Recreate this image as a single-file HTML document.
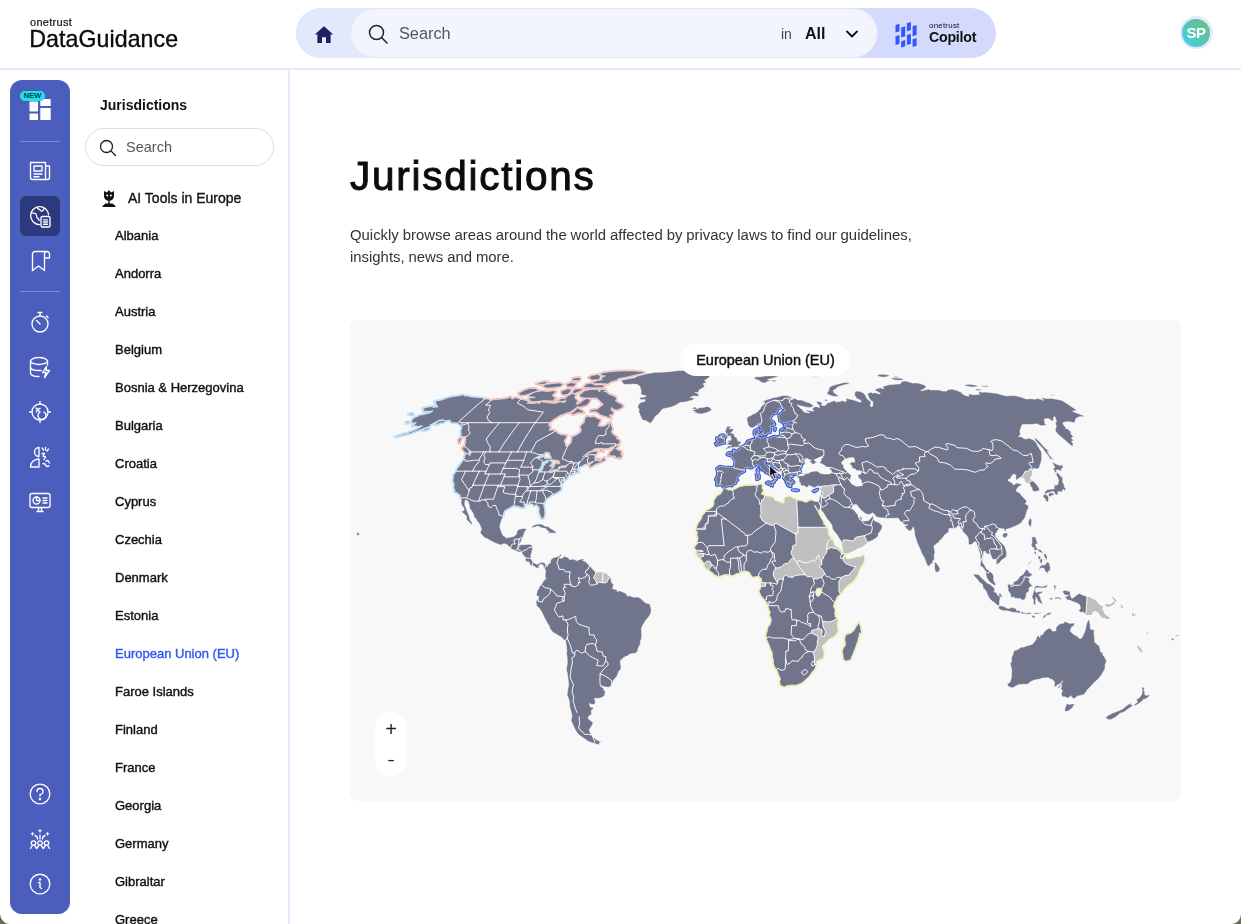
<!DOCTYPE html>
<html lang="en">
<head>
<meta charset="utf-8">
<title>Jurisdictions | DataGuidance</title>
<style>
*{box-sizing:border-box;margin:0;padding:0}
html,body{width:1241px;height:924px;overflow:hidden;background:#fff;font-family:"Liberation Sans",Arial,sans-serif;color:#111}
.abs{position:absolute}
#hdr{will-change:transform;position:absolute;left:0;top:0;width:1241px;height:70px;background:#fff;border-bottom:2px solid #e6eafc}
#logo1{position:absolute;left:30px;top:15.5px;font-size:11px;letter-spacing:.3px;color:#111;line-height:12px;-webkit-text-stroke:.2px #111}
#logo2{position:absolute;left:29.3px;top:25px;font-size:23.2px;letter-spacing:.05px;color:#0b0b0b;line-height:28px;-webkit-text-stroke:.35px #0b0b0b}
#pill{position:absolute;left:296px;top:8px;width:700px;height:50px;border-radius:25px;background:#d3dafb;overflow:hidden}
#pillL{position:absolute;left:0;top:0;width:120px;height:50px;background:#e4e8fc}
#sbox{position:absolute;left:54px;top:0;width:528px;height:50px;border-radius:25px;background:#f3f5fe;border:1px solid #dfe4fb}
#sph{position:absolute;left:48px;top:14px;font-size:16.3px;color:#555;line-height:20px}
#sin{position:absolute;left:430px;top:17px;font-size:14px;color:#444;line-height:16px}
#sall{position:absolute;left:454px;top:16px;font-size:16px;font-weight:bold;color:#111;line-height:18px}
#cop1{position:absolute;left:633px;top:13px;font-size:8px;color:#111;line-height:9px;letter-spacing:.2px}
#cop2{position:absolute;left:633px;top:20.5px;font-size:14.2px;font-weight:bold;color:#111;line-height:17px;letter-spacing:-.25px}
#ava{position:absolute;left:1179.5px;top:16px;width:33px;height:33px;border-radius:50%;background:#e4e7fd}
#ava i{position:absolute;left:2.5px;top:2.5px;width:28px;height:28px;border-radius:50%;background:linear-gradient(45deg,#45d0e8 10%,#5cc4a4 60%,#6cc07a 100%);font-style:normal;color:#fff;font-weight:bold;font-size:15px;line-height:28px;text-align:center;letter-spacing:-.5px}
#nav{position:absolute;left:10px;top:80px;width:60px;height:834px;border-radius:12px;background:#4b5ebd}
#nav .sep{position:absolute;left:10px;width:40px;height:1px;background:#7c8ad0}
#nav .act{position:absolute;left:10px;top:116px;width:40px;height:40px;border-radius:6px;background:#2c397f}
#nav svg{position:absolute;left:18px;width:24px;height:24px;fill:none;stroke:#fff;stroke-width:1.35;stroke-linecap:round;stroke-linejoin:round;overflow:visible}
#new{position:absolute;left:10.4px;top:11.3px;width:24.2px;height:9.4px;border-radius:4.7px;background:#19e3ee;color:#0a1a2a;font-size:7.4px;line-height:9.6px;text-align:center;letter-spacing:0;-webkit-text-stroke:.2px #0a1a2a}
#side{will-change:transform;position:absolute;left:70px;top:70px;width:220px;height:854px;border-right:2px solid #e6eafc;overflow:hidden}
#sttl{position:absolute;left:30px;top:27px;font-size:14px;font-weight:bold;line-height:16px;color:#111}
#ssearch{position:absolute;left:15px;top:58px;width:189px;height:38px;border-radius:19px;border:1px solid #dcdcdc;background:#fff}
#ssearch span{position:absolute;left:40px;top:10px;font-size:14.5px;color:#555;line-height:17px}
#ait{position:absolute;left:58px;top:120px;font-size:14px;line-height:16px;color:#111;-webkit-text-stroke:.35px #111}
ul#jl{position:absolute;left:45px;top:158px;list-style:none}
ul#jl li{height:38px;font-size:13px;line-height:16px;color:#111;-webkit-text-stroke:.4px #111;white-space:nowrap}
ul#jl li.sel{color:#3257f2;-webkit-text-stroke:.4px #3257f2}
#h1{will-change:transform;position:absolute;left:349.6px;top:151px;font-size:40.5px;line-height:50px;color:#0c0c0c;letter-spacing:1.75px;-webkit-text-stroke:1px #0c0c0c}
#desc{will-change:transform;position:absolute;left:350px;top:224px;width:600px;font-size:14.9px;line-height:22px;color:#333;word-spacing:-.25px}
#card{position:absolute;left:350px;top:320px;width:831px;height:481px;border-radius:8px;background:#f8f8f8;overflow:hidden}
#tip{will-change:transform;position:absolute;left:330px;top:24px;width:171px;height:32px;border-radius:16px;background:#fff;font-size:14.5px;line-height:32px;text-align:center;color:#111;-webkit-text-stroke:.45px #111}
#zpill{will-change:transform;position:absolute;left:25px;top:392px;width:32px;height:64px;border-radius:16px;background:#fff}#zpill span{position:absolute;left:0;width:32px;text-align:center;line-height:28px;color:#222}
</style>
</head>
<body>
<div id="hdr">
  <div id="logo1">onetrust</div>
  <div id="logo2">DataGuidance</div>
  <div id="pill">
    <div id="pillL"></div>
    <svg class="abs" style="left:18px;top:16.5px" width="20" height="20" viewBox="0 0 20 20"><path d="M10 1.2 L0.8 9.6 H3.4 V18 H8 V12.2 H12 V18 H16.6 V9.6 H19.2 Z" fill="#1a2260"/></svg>
    <div id="sbox">
      <svg class="abs" style="left:16px;top:14px" width="22" height="22" viewBox="0 0 22 22" fill="none" stroke="#222" stroke-width="1.5" stroke-linecap="round"><circle cx="9.5" cy="9.5" r="7"/><path d="M14.8 14.8 L20 20"/></svg>
      <div id="sph">Search</div>
      <div id="sin">in</div>
      <div id="sall">All</div>
      <svg class="abs" style="left:494px;top:19px" width="14" height="12" viewBox="0 0 14 12" fill="none" stroke="#111" stroke-width="1.8" stroke-linecap="round" stroke-linejoin="round"><path d="M2 3.5 L7 8.5 L12 3.5"/></svg>
    </div>
    <svg class="abs" style="left:598px;top:12px" width="24" height="28" viewBox="0 0 24 28" fill="#3355ff"><path d="M1.5 4.9 L5.5 3.7 V11.3 L1.5 12.5 Z M1.5 16.2 L5.5 15 V23.8 L1.5 25 Z M7.2 7.4 L11.2 6.2 V16.3 L7.2 17.5 Z M7.2 21.2 L11.2 20 V26.3 L7.2 27.5 Z M12.9 3.2 L16.9 2 V10.0 L12.9 11.2 Z M12.9 14.899999999999999 L16.9 13.7 V23.8 L12.9 25 Z M18.6 6.2 L22.6 5 V15.0 L18.6 16.2 Z M18.6 19.2 L22.6 18 V25.8 L18.6 27 Z"/></svg>
    <div id="cop1">onetrust</div>
    <div id="cop2">Copilot</div>
  </div>
  <div id="ava"><i>SP</i></div>
</div>

<div id="nav">
  <div class="sep" style="top:60.5px"></div>
  <div class="sep" style="top:211px"></div>
  <div class="act"></div>
  <!-- dashboard -->
  <svg style="top:17px" viewBox="0 0 24 24"><g fill="#fff" stroke="none"><rect x="1.5" y="4.6" width="8.5" height="9.8" rx=".6"/><rect x="12.3" y="2" width="10.4" height="7" rx=".6"/><rect x="1.5" y="16.5" width="8.5" height="6.5" rx=".6"/><rect x="12.300" y="11.100" width="10.400" height="11.900" rx=".600"/></g></svg>
  <div id="new">NEW</div>
  <!-- news -->
  <svg style="top:79px" viewBox="0 0 24 24"><path d="M2.5 3.5 H17.5 V20.5 H4.5 A2 2 0 0 1 2.5 18.5 Z"/><path d="M17.5 7 H21.5 V18.5 A2 2 0 0 1 19.5 20.5 H17.5"/><rect x="6" y="7" width="8" height="5"/><path d="M6 15 H14 M6 17.7 H11"/></svg>
  <!-- globe + doc (active) -->
  <svg style="top:124px" viewBox="0 0 24 24"><path d="M11.5 20.6 A9 9 0 1 1 20.6 10.8"/><path d="M3.2 9 C5 9.5 6 8.5 7.5 9.5 C9 10.5 8 12 9 13.5 C10 15 11 14.5 11 16.5"/><path d="M9 3.2 C9.5 5 11.5 5 12.5 6.5 C13.5 8 15.5 6.5 16 4.5"/><rect x="13" y="12.5" width="9" height="10.5" rx="1.5"/><path d="M15.5 15.8 H19.5 M15.5 18 H19.5 M15.5 20.2 H19.5"/></svg>
  <!-- bookmark scroll -->
  <svg style="top:169px" viewBox="0 0 24 24"><path d="M4.5 21.5 V5 A2.5 2.5 0 0 1 7 2.5 H19 A2.5 2.5 0 0 1 21.5 5 V9 H16.5 V5 A2.5 2.5 0 0 1 19 2.5"/><path d="M4.5 21.5 L10.5 17 L16.5 21.5 V9"/></svg>
  <!-- stopwatch -->
  <svg style="top:230px" viewBox="0 0 24 24"><circle cx="12" cy="14" r="8"/><path d="M10 2.5 H14 M12 2.5 V6 M18.5 6 L20 7.5 M12 14 L8.5 10.5"/></svg>
  <!-- database bolt -->
  <svg style="top:275px" viewBox="0 0 24 24"><ellipse cx="11" cy="6" rx="8.5" ry="3.5"/><path d="M2.5 6 V18 C2.5 20 6 21.5 11 21.5 M19.5 6 V10 M2.5 12 C2.5 14 6 15.5 11 15.5 H13"/><path d="M18.5 11.5 L14.5 17.5 H18 L16.5 22.5 L21.5 15.5 H18 Z"/></svg>
  <!-- target -->
  <svg style="top:320px" viewBox="0 0 24 24"><circle cx="12" cy="12" r="8"/><path d="M12 1.5 V4 M12 20 V22.5 M1.5 12 H4 M20 12 H22.5"/><path d="M12 12 L8 8 M12 12 A4 4 0 1 0 16 12 M8.5 12 A3.5 3.5 0 0 1 12 8.5"/></svg>
  <!-- person split -->
  <svg style="top:365px" viewBox="0 0 24 24"><path d="M11 2.5 A4.5 4.5 0 0 0 11 11.5 Z M11 14 C6 14 2.5 17.5 2.5 22 H11 Z"/><path d="M14 3 L15.5 5 M17.5 2.5 V5 M20.5 4 L19 6 M14 8.5 H16.5 L15 11 L17.5 12 L16 14.5 M18 16 L20 15.5 L21.5 18 M15 18.5 L17 19 L18.5 21.5 L21 21"/></svg>
  <!-- monitor chart -->
  <svg style="top:410px" viewBox="0 0 24 24"><rect x="2" y="3.5" width="20" height="14" rx="2"/><path d="M9 21.5 H15 M10.5 17.5 V21.5 M13.5 17.5 V21.5"/><circle cx="8.5" cy="10.5" r="3.5"/><path d="M8.5 7 V10.5 H12 M15 8 H19 M15 10.5 H19 M15 13 H19"/></svg>
  <!-- help -->
  <svg style="top:702px" viewBox="0 0 24 24"><circle cx="12" cy="12" r="9.800"/><path d="M9 9.5 A3 3 0 1 1 12 12.5 V14"/><circle cx="12" cy="17" r=".6" fill="#fff"/></svg>
  <!-- community -->
  <svg style="top:747px" viewBox="0 0 24 24"><circle cx="5.5" cy="16" r="2.2"/><circle cx="12" cy="16" r="2.2"/><circle cx="18.500" cy="16" r="2.200"/><path d="M2.500 21.500 L4 19 M7 19 L8.700 21.500 L10.500 19 M13.500 19 L15.300 21.500 L17 19 M20 19 L21.500 21.500"/><path d="M12 12 V8 M9.500 12 C9.500 10 8.500 9 7 8.500 M14.500 12 C14.500 10 15.500 9 17 8.500"/><path d="M12 2.500 V5 M10.800 3.750 H13.200 M4.500 5.500 V8 M3.300 6.750 H5.700 M19.500 5.500 V8 M18.300 6.750 H20.700" stroke-width="1.200"/></svg>
  <!-- info -->
  <svg style="top:792px" viewBox="0 0 24 24"><circle cx="12" cy="12" r="9.800"/><path d="M10.500 10.500 H12 V15.500 L13.500 16.500"/><circle cx="12" cy="7.500" r=".6" fill="#fff"/></svg>
</div>

<div id="side">
  <div id="sttl">Jurisdictions</div>
  <div id="ssearch">
    <svg class="abs" style="left:13px;top:10px" width="18" height="18" viewBox="0 0 18 18" fill="none" stroke="#222" stroke-width="1.3" stroke-linecap="round"><circle cx="7.500" cy="7.500" r="6"/><path d="M12 12 L16.500 16.500"/></svg>
    <span>Search</span>
  </div>
  <svg class="abs" style="left:30px;top:119px" width="18" height="19" viewBox="0 0 18 19" fill="#111"><path d="M9 1 L11 3.500 L14 2 V7 A5 5 0 0 1 4 7 V2 L7 3.500 Z M8.300 11.500 H9.700 V14.500 H8.300 Z M5.500 14.500 H12.500 L15.500 17 V18 H2.500 V17 Z"/><circle cx="7.200" cy="6.500" r="1" fill="#fff"/><circle cx="10.800" cy="6.500" r="1" fill="#fff"/></svg>
  <div id="ait">AI Tools in Europe</div>
  <ul id="jl">
    <li>Albania</li>
    <li>Andorra</li>
    <li>Austria</li>
    <li>Belgium</li>
    <li>Bosnia &amp; Herzegovina</li>
    <li>Bulgaria</li>
    <li>Croatia</li>
    <li>Cyprus</li>
    <li>Czechia</li>
    <li>Denmark</li>
    <li>Estonia</li>
    <li class="sel">European Union (EU)</li>
    <li>Faroe Islands</li>
    <li>Finland</li>
    <li>France</li>
    <li>Georgia</li>
    <li>Germany</li>
    <li>Gibraltar</li>
    <li>Greece</li>
  </ul>
</div>

<div id="h1">Jurisdictions</div>
<div id="desc">Quickly browse areas around the world affected by privacy laws to find our guidelines, insights, news and more.</div>

<div id="card">
<svg class="abs" style="left:0;top:0" width="831" height="480" viewBox="0 0 831 480" stroke-linejoin="round" stroke-linecap="round">
<path d="M510.4,306.7 510.7,309.3 511.3,312.1 510.4,313.9 509.3,312.6 509.2,315.7 508.2,318.0 508.1,320.1 506.9,323.0 506.2,325.3 504.9,328.8 503.3,333.1 501.7,336.5 500.8,339.5 499.0,340.2 496.1,341.0 493.5,339.3 493.0,334.7 492.3,331.5 492.6,330.2 493.9,327.5 495.2,326.1 495.6,323.9 494.9,319.8 494.9,318.0 496.3,314.6 498.4,314.0 500.9,313.2 502.7,311.8 504.0,310.7 505.4,307.9 506.2,306.7 507.5,305.1 508.7,302.7 509.9,305.3Z M378.2,170.2 380.5,170.0 382.6,170.5 385.9,168.7 390.3,166.6 394.5,165.7 399.1,165.7 403.3,165.3 405.4,165.5 407.7,165.2 410.2,164.3 412.8,164.9 411.9,166.9 412.0,168.6 413.2,170.2 412.6,171.6 411.0,173.9 413.4,175.0 416.1,176.7 418.4,176.7 421.1,177.5 423.2,178.1 424.0,180.3 426.7,181.5 429.6,182.3 432.7,184.0 434.8,182.6 434.7,180.6 434.8,178.9 436.4,177.3 438.9,176.7 440.6,177.0 442.1,178.4 444.1,179.1 447.0,180.3 449.4,180.6 451.8,180.9 455.9,182.5 458.2,181.5 459.3,180.6 461.0,180.3 462.7,180.6 463.9,181.2 464.8,185.0 464.5,186.0 465.4,187.6 466.5,189.5 467.7,191.0 468.5,192.6 468.9,194.0 469.9,195.8 471.5,198.7 473.2,201.7 473.7,202.0 473.3,203.9 475.4,205.6 476.8,207.3 477.3,209.6 478.0,211.8 478.0,214.0 478.7,216.3 480.4,217.7 481.7,218.5 483.1,222.5 484.1,225.3 485.0,226.1 486.1,227.2 487.9,227.8 489.9,230.1 491.7,232.0 492.6,232.6 494.0,234.0 494.0,235.5 492.6,236.7 493.7,236.5 494.6,237.2 496.4,239.3 498.4,239.7 502.1,238.9 504.5,237.9 506.2,237.8 508.7,237.4 511.4,236.8 513.6,235.5 513.5,237.9 514.2,239.7 513.1,242.4 511.7,245.2 510.5,246.8 508.8,250.0 507.6,254.1 506.0,256.7 503.8,259.8 501.4,262.4 499.8,263.3 498.3,264.3 496.5,266.0 494.5,268.3 492.9,270.1 490.4,273.7 488.7,275.6 487.0,276.8 486.7,278.1 485.6,280.5 484.4,282.2 484.2,283.3 483.4,286.0 483.6,287.2 484.6,288.2 485.0,290.7 484.5,292.4 484.9,294.2 485.3,297.2 486.6,298.0 487.5,299.2 487.0,302.8 487.0,305.5 487.1,309.0 487.4,311.4 485.3,314.6 483.1,316.6 480.6,317.7 477.8,319.4 475.9,321.9 473.6,323.9 472.2,324.9 471.7,326.7 472.6,329.5 473.1,330.9 473.4,333.7 473.2,336.2 472.6,337.9 470.6,338.8 468.6,339.6 466.6,340.7 465.8,342.0 466.4,344.5 465.5,346.6 464.8,348.9 464.0,350.0 462.2,351.7 461.3,352.9 459.7,355.5 457.3,358.0 454.6,360.4 453.1,361.8 450.6,363.5 447.5,364.5 445.6,365.2 442.2,364.9 439.3,365.2 436.5,365.7 434.1,366.9 432.3,365.9 430.7,365.6 430.5,364.3 429.5,361.8 430.6,359.3 429.8,357.0 428.5,354.2 427.5,351.3 426.6,349.4 424.9,347.2 423.7,344.0 423.3,339.3 422.4,336.2 422.5,332.9 421.2,330.3 419.5,325.8 417.8,321.9 416.1,317.6 416.2,314.6 417.1,311.8 418.1,307.3 420.3,304.5 421.3,301.1 421.4,299.2 420.2,296.3 419.4,294.7 419.9,293.8 420.4,292.1 419.7,291.1 419.1,289.5 417.9,286.2 417.5,284.7 416.7,282.6 414.8,280.1 413.7,278.6 411.1,275.8 410.1,273.3 409.0,270.9 410.4,269.4 410.6,268.0 411.1,266.3 411.5,263.9 411.6,262.4 411.8,260.8 411.3,257.9 410.1,257.9 409.4,256.3 407.9,256.3 405.9,256.6 405.0,256.7 402.4,257.0 400.7,254.5 399.7,252.5 398.2,251.4 395.7,251.1 393.2,251.3 390.3,252.0 389.8,252.8 386.8,253.5 384.2,254.8 382.1,255.8 379.9,254.8 377.4,254.4 374.9,254.6 372.2,255.2 370.8,255.8 368.2,256.9 366.2,255.3 364.9,255.1 362.4,252.5 360.6,251.4 359.1,250.1 356.4,248.3 355.4,246.9 354.5,245.2 354.4,243.8 353.5,242.4 352.0,240.5 350.8,238.8 349.8,237.9 348.1,236.0 346.6,234.6 345.9,232.6 346.4,231.3 346.0,229.8 344.3,227.7 345.3,226.4 346.8,224.2 347.4,221.4 348.2,218.3 347.0,214.6 347.6,212.1 345.8,210.7 346.1,208.7 347.8,204.5 348.7,202.5 351.1,199.4 352.4,195.8 355.1,192.8 356.4,190.6 359.8,189.1 363.0,186.5 364.3,183.7 363.8,183.0 364.1,180.6 365.4,178.4 367.3,175.7 369.4,174.7 371.2,173.5 372.9,170.2 373.5,168.6 374.9,168.3Z M466.7,268.5 465.9,271.6 465.9,274.2 466.7,276.1 468.6,276.4 470.1,275.0 471.6,272.5 471.9,268.8 469.9,268.1Z" fill="none" stroke="#eef6a6" stroke-width="3.0"/>
<path d="M110.6,177.3 110.0,174.7 109.0,174.3 108.3,173.6 106.7,172.5 105.0,172.3 104.8,171.9 105.0,169.8 104.3,169.0 103.7,167.1 104.1,166.3 104.2,162.9 103.3,162.4 103.0,159.7 103.5,158.2 103.5,155.5 105.9,151.9 106.9,148.9 108.2,147.5 110.8,144.0 111.6,142.9 113.7,139.5 114.6,137.5 114.9,136.0 115.8,133.6 119.6,134.4 119.7,135.8 121.2,132.6 121.2,131.9 125.4,131.9 129.7,131.9 134.0,131.9 138.3,131.9 142.5,131.9 146.8,131.9 151.1,131.9 155.3,131.9 159.6,131.9 163.9,131.9 168.2,131.9 172.4,131.9 176.7,131.9 181.0,131.9 181.8,132.7 185.1,133.0 187.7,134.4 189.8,134.5 192.0,134.7 192.7,134.4 192.4,134.7 189.3,135.8 184.7,138.1 188.1,138.2 191.8,137.4 194.1,136.2 194.6,138.6 197.9,138.6 200.5,138.8 200.9,138.2 201.1,138.8 202.0,139.9 201.8,139.9 199.9,140.6 202.0,142.1 201.7,143.7 199.5,146.1 200.2,146.5 202.2,146.0 201.9,148.4 200.1,150.4 199.6,151.0 199.4,150.9 198.3,152.1 200.0,152.9 202.5,152.3 205.6,151.2 209.6,148.9 209.4,148.9 209.7,147.8 209.7,147.7 209.8,147.8 213.2,147.8 216.1,147.1 217.0,145.4 216.4,145.5 216.8,145.1 219.7,143.3 221.2,142.9 224.8,142.9 228.3,142.9 230.2,141.8 231.8,140.4 233.3,138.2 235.7,136.2 237.6,136.4 238.5,137.1 237.2,141.0 237.7,142.1 238.2,143.2 236.1,144.3 233.8,144.6 233.0,145.7 230.0,146.6 228.3,148.3 228.2,149.4 227.0,150.3 227.4,151.4 227.6,151.8 228.5,151.1 228.8,152.1 227.1,152.5 226.0,152.6 225.0,152.9 221.7,153.3 223.9,153.9 221.3,154.7 218.9,154.8 218.5,155.5 216.6,158.6 215.1,159.7 214.1,158.5 214.6,160.1 214.3,161.3 213.2,162.4 211.3,164.8 211.8,161.8 211.7,159.0 210.9,162.4 210.3,165.2 211.0,165.6 211.1,167.4 210.9,170.1 208.0,171.9 204.1,174.0 201.4,175.0 198.8,177.1 195.9,179.2 193.6,183.9 193.9,187.1 194.5,189.2 194.8,194.1 194.2,196.6 193.3,198.3 191.6,198.5 190.3,195.8 190.0,194.8 189.5,193.5 188.9,191.0 189.4,189.3 189.0,187.2 188.3,186.2 186.8,184.7 183.8,185.7 183.2,184.6 182.7,183.9 179.8,183.9 177.9,184.0 175.3,183.9 174.0,184.6 174.4,186.8 173.7,187.6 171.1,187.4 169.0,186.5 166.7,186.1 163.6,185.7 161.0,186.8 159.6,187.8 156.6,189.3 154.3,191.0 153.5,193.3 153.3,196.2 148.8,194.9 148.6,191.9 147.2,189.6 145.6,185.4 143.0,185.5 140.9,187.8 138.1,186.0 137.9,183.2 135.1,179.9 131.1,179.9 130.7,181.1 127.3,181.1 123.9,181.1 120.0,179.5 116.2,177.8 113.5,177.8 110.8,177.8Z M189.0,150.4 188.8,152.1 190.4,151.9 192.6,149.8 193.5,146.5 195.6,143.5 197.2,142.9 199.1,141.0 199.8,140.3 198.1,140.2 195.9,140.7 194.5,141.3 192.6,142.6 191.2,144.0 191.9,144.8 190.0,147.9Z M115.2,116.6 111.6,116.7 111.0,115.2 111.6,113.7 110.9,112.7 111.0,110.5 112.1,107.4 110.6,105.0 109.1,103.9 106.8,102.8 104.4,102.8 102.0,102.7 100.1,101.3 100.3,99.9 97.6,100.3 94.9,100.7 93.5,102.7 91.1,102.8 87.4,104.3 84.1,104.8 86.0,103.7 89.1,101.3 91.6,100.8 94.2,100.4 93.5,99.6 89.4,100.1 86.6,101.4 83.9,103.0 80.4,104.5 80.3,105.7 76.6,107.4 74.2,108.1 70.7,109.5 67.0,111.0 62.7,112.3 61.7,113.1 57.8,113.9 54.7,114.8 51.2,115.6 47.4,116.8 44.5,116.8 48.9,115.6 51.2,114.7 53.7,113.9 57.6,113.1 59.5,112.3 64.0,110.6 67.0,109.2 70.0,107.4 72.6,105.9 69.7,105.8 67.8,106.6 66.0,105.5 61.9,106.2 64.3,104.8 66.3,102.7 65.2,102.8 62.0,103.0 61.8,101.2 62.9,98.9 63.9,98.1 67.0,96.8 70.4,95.1 73.0,94.8 77.2,93.8 80.7,92.8 81.9,91.6 83.2,90.6 80.8,91.0 78.5,91.3 76.2,91.3 73.9,91.3 73.1,91.1 74.3,89.5 72.5,88.6 75.4,87.8 78.4,87.0 81.2,86.7 84.0,86.3 82.7,87.4 85.2,87.3 87.7,87.1 87.7,86.4 87.3,85.3 85.8,84.8 86.2,83.4 86.3,82.8 84.2,81.9 87.1,80.7 90.6,80.4 95.8,78.6 99.7,77.3 104.2,76.5 106.4,76.2 108.6,75.9 113.0,74.8 114.6,76.1 116.6,76.1 118.5,76.2 120.6,76.9 122.1,77.0 123.6,77.2 125.6,77.4 127.6,77.6 129.5,77.7 131.4,77.8 133.1,78.3 134.9,78.9 129.4,83.3 124.1,87.8 118.9,92.5 113.7,97.2 108.7,101.9 110.3,102.3 111.9,102.7 112.0,105.5 115.4,104.1 118.3,103.2 118.0,104.5 119.0,106.8 118.5,110.5 119.4,111.8 120.2,113.1 117.8,115.8 115.8,116.6 115.2,116.6Z M74.1,109.2 77.9,108.0 79.6,108.0 78.5,109.2 75.6,110.2 73.2,110.8Z M59.2,101.7 58.7,103.0 56.0,103.3 56.2,102.2Z M61.0,95.1 59.3,94.3 58.3,94.1 61.9,93.3 63.7,94.3Z" fill="none" stroke="#b3defc" stroke-width="2.8"/>
<path d="M120.9,131.1 118.9,129.6 118.1,129.2 116.9,127.9 114.4,126.1 115.1,125.1 115.2,123.0 115.7,121.1 115.7,119.8 115.8,117.6 115.2,116.6 115.8,116.6 117.8,115.8 120.2,113.1 119.4,111.8 118.5,110.5 119.0,106.8 118.0,104.5 118.3,103.2 115.4,104.1 112.0,105.5 111.9,102.7 110.3,102.3 108.7,101.9 113.7,97.2 118.9,92.5 124.1,87.8 129.4,83.3 134.9,78.9 136.5,79.0 138.2,79.1 139.5,79.9 140.8,80.6 143.7,79.7 146.2,79.5 148.6,79.3 150.6,79.2 152.6,79.0 154.7,78.7 156.8,78.5 160.6,76.8 160.9,78.0 162.2,79.2 165.5,77.6 166.9,78.0 168.4,78.5 170.1,79.0 171.8,79.4 173.9,80.0 176.0,80.6 177.7,81.2 179.3,81.8 176.8,83.3 179.5,83.5 181.9,83.4 184.2,83.4 186.3,83.1 188.4,82.8 189.1,84.0 191.6,81.3 192.7,82.1 195.1,82.4 197.5,82.8 199.6,83.0 201.7,83.3 204.0,83.3 206.3,83.3 210.4,81.6 211.7,82.2 213.1,82.8 215.9,81.6 215.6,79.7 214.4,81.1 212.5,81.2 210.6,81.3 209.2,80.9 207.8,80.4 211.3,78.5 213.2,78.4 215.0,78.3 215.4,78.9 215.2,78.0 218.2,75.7 222.9,73.4 224.3,74.2 225.8,75.0 224.5,77.6 225.9,79.2 226.9,80.2 228.0,81.1 226.0,83.3 227.3,84.5 230.4,82.8 233.1,80.4 236.4,78.4 238.4,78.9 240.4,79.4 239.8,81.6 236.9,85.2 234.1,86.0 231.1,86.9 229.3,86.9 227.4,86.4 223.7,89.6 220.0,92.1 217.8,92.6 213.4,94.2 209.7,95.6 206.6,97.6 202.8,99.9 199.7,102.7 198.5,105.9 200.5,105.9 199.3,110.5 202.3,110.0 204.1,110.4 205.8,110.9 207.3,113.1 209.0,113.9 210.8,114.7 213.7,115.0 217.0,115.4 215.6,118.4 214.0,121.1 215.4,123.8 215.4,125.7 217.0,126.2 219.2,125.1 221.0,123.1 221.4,121.1 222.0,119.0 221.6,116.7 223.2,116.6 226.5,115.0 230.6,112.3 231.3,110.5 231.2,109.2 230.3,106.7 231.3,105.3 234.2,102.6 234.5,100.7 234.8,98.9 236.5,96.6 237.4,96.3 240.7,97.1 244.4,96.6 246.3,97.9 247.8,98.6 250.9,99.9 249.3,103.0 248.1,105.7 250.7,106.5 254.8,105.9 256.3,105.3 258.4,103.0 260.1,101.8 260.9,104.0 261.7,106.6 262.6,109.2 261.2,111.7 263.1,114.6 264.8,115.5 265.9,116.3 267.4,117.9 266.1,118.4 267.9,119.2 268.9,119.5 269.8,121.1 269.5,123.1 268.7,123.8 265.5,125.4 261.0,127.0 258.4,128.4 254.4,128.7 252.1,128.5 249.8,128.4 247.1,128.5 244.5,128.7 241.5,131.1 239.7,131.4 235.3,134.3 233.6,136.0 232.5,137.1 235.4,135.1 238.1,133.4 240.7,132.3 243.3,131.5 245.5,131.2 247.9,132.6 245.5,134.5 242.6,134.5 244.1,135.5 245.7,135.2 244.6,137.1 245.0,139.5 246.3,140.2 248.9,141.0 251.2,141.1 251.3,140.4 253.0,138.5 254.5,137.4 255.3,139.7 254.6,140.4 251.9,141.9 249.4,142.9 245.7,144.0 242.0,146.2 240.1,147.2 239.2,146.2 240.6,144.0 243.5,141.9 244.0,141.0 240.7,142.2 238.2,143.2 237.7,142.1 237.2,141.0 238.5,137.1 237.6,136.4 235.7,136.2 233.3,138.2 231.8,140.4 230.2,141.8 228.3,142.9 224.8,142.9 221.2,142.9 219.7,143.3 216.8,145.1 216.4,145.5 215.0,145.8 212.8,145.8 209.9,146.4 208.1,147.6 209.7,147.7 209.7,147.8 209.4,148.9 208.3,148.9 205.7,149.7 203.5,149.6 200.6,151.2 199.6,151.0 200.1,150.4 201.9,148.4 203.7,147.6 204.9,144.8 206.7,142.4 207.0,144.0 209.6,143.5 209.7,142.1 208.6,140.4 206.7,140.2 204.0,139.9 202.0,139.9 201.1,138.8 200.9,138.2 201.5,137.4 200.0,134.8 199.4,132.6 195.7,132.2 192.7,134.4 192.0,134.7 189.8,134.5 187.7,134.4 185.1,133.0 181.8,132.7 181.0,131.9 176.7,131.9 172.4,131.9 168.2,131.9 163.9,131.9 159.6,131.9 155.3,131.9 151.1,131.9 146.8,131.9 142.5,131.9 138.3,131.9 134.0,131.9 129.7,131.9 125.4,131.9 121.2,131.9Z M249.2,140.2 246.6,139.7 245.5,138.5 248.4,139.1 250.6,138.9Z M251.6,130.0 253.6,131.7 251.0,131.1 248.3,129.6Z M119.1,132.2 118.7,133.6 116.0,133.0 114.5,131.9 113.7,130.6 112.3,128.9 112.3,127.2 114.8,126.9 117.2,128.4 118.2,129.8Z M108.3,120.0 109.7,118.2 112.0,118.4 110.2,120.8 109.5,123.3 108.5,122.2Z M234.2,93.1 231.2,92.8 228.3,92.6 225.7,93.6 223.1,94.6 220.3,93.6 224.0,91.8 227.5,88.1 229.5,89.3 230.9,90.0 232.4,90.6 233.3,92.1Z M250.3,86.9 253.4,84.5 252.2,83.3 250.9,82.1 249.9,80.9 248.9,79.7 247.7,78.9 246.4,78.0 244.1,78.0 241.7,78.0 239.3,78.0 237.1,78.0 234.9,78.0 232.6,77.6 230.3,77.1 229.5,75.0 232.0,73.0 234.9,70.7 238.5,70.0 242.0,69.3 245.0,69.4 247.9,69.5 248.9,71.4 250.2,71.4 249.3,70.2 253.0,69.5 254.5,69.7 255.9,70.0 255.7,71.4 253.7,71.5 256.3,71.8 257.2,72.8 258.2,73.9 259.9,74.6 261.7,75.2 263.4,75.9 265.2,76.6 266.5,78.7 265.3,80.9 267.3,82.1 269.4,83.3 271.1,84.2 272.9,85.2 273.0,86.9 270.3,88.5 267.6,90.1 265.1,89.5 262.6,88.9 261.7,87.1 261.0,90.1 262.2,91.3 263.5,92.6 262.6,95.1 259.6,94.6 260.4,96.8 261.1,98.6 259.0,97.6 257.3,97.1 255.7,96.6 253.2,95.8 250.7,95.1 248.8,93.3 247.4,92.4 246.0,91.6 243.1,91.7 240.1,91.8 240.3,90.1 243.9,89.6 247.5,89.1Z M179.3,76.6 179.3,75.0 184.2,72.3 188.0,71.6 191.8,70.9 193.8,71.1 195.8,71.4 197.9,71.6 201.0,71.1 204.0,70.7 205.1,71.3 206.3,71.8 202.6,74.6 202.8,76.2 204.5,77.1 206.3,78.0 203.7,79.0 205.1,80.4 202.0,80.9 199.8,80.8 197.7,80.6 195.4,80.6 193.2,80.6 190.0,81.1 186.8,81.6 184.1,81.6 181.4,81.6 180.4,80.8 179.4,79.9 178.5,78.3 181.6,77.8 184.8,77.3 182.0,77.0Z M211.4,72.7 211.3,71.1 214.5,70.1 217.6,69.1 219.3,69.1 221.0,69.1 220.3,71.6 217.7,74.3 215.2,74.7 212.7,75.0 212.0,73.9Z M170.9,75.5 169.6,74.5 168.3,73.5 174.9,70.0 179.5,68.5 182.4,68.5 185.4,68.5 187.1,69.5 188.9,70.5 184.6,71.9 180.3,73.4 175.8,75.0 173.3,75.2Z M231.4,68.9 233.1,69.8 228.7,71.8 224.6,73.4 223.3,73.0 222.0,72.5 225.3,69.1 228.4,69.0Z M254.7,65.6 252.9,67.6 250.6,67.6 248.3,67.7 246.0,67.8 243.7,67.8 241.5,67.8 239.2,67.8 237.1,67.6 235.1,67.5 233.0,67.4 236.4,64.1 238.9,63.6 241.4,63.2 243.3,64.2 245.1,65.2 247.4,65.1 249.7,65.0 252.0,64.9 253.3,65.3Z M202.2,67.8 199.2,67.9 196.1,68.0 194.7,67.1 193.3,66.3 194.8,64.5 197.7,64.2 200.7,63.8 203.6,63.4 206.8,63.2 209.9,63.0 211.4,63.8 212.9,64.5 210.2,66.7 207.6,67.1 204.9,67.4Z M220.7,62.8 223.3,63.0 225.9,63.2 225.6,64.9 222.8,66.7 220.3,66.7 217.8,66.7 216.9,65.6 216.2,64.5Z M194.2,61.5 196.3,61.7 198.4,61.9 194.6,64.1 192.2,64.3 189.9,64.5 187.9,64.2 185.9,63.9 190.0,62.7Z M230.3,59.1 229.3,60.5 226.9,60.5 224.5,60.5 222.1,60.5 222.7,58.3 225.2,58.0 227.6,57.7 230.0,57.5Z M238.3,57.7 242.1,55.4 245.0,54.9 247.8,54.5 249.2,55.2 250.6,55.9 249.8,57.9 249.3,59.7 246.9,59.7 244.4,59.8 242.0,59.9 240.7,59.1 239.5,58.4Z M249.4,54.5 253.1,52.7 255.9,52.4 258.7,52.1 261.4,51.8 264.1,51.5 266.9,51.2 269.4,51.1 271.9,51.1 274.4,51.0 276.9,51.0 279.4,50.9 281.9,50.9 284.0,51.1 286.2,51.2 288.3,51.4 290.5,51.6 292.7,51.8 293.7,52.3 294.7,52.9 292.3,53.4 289.8,53.9 287.3,54.5 284.3,55.2 281.3,55.9 277.9,56.7 274.4,57.5 271.1,58.1 267.8,58.7 267.0,60.3 263.8,61.1 260.6,61.9 257.9,63.9 255.8,63.8 253.7,63.7 251.6,63.6 249.1,63.6 246.7,63.6 244.2,63.6 243.3,63.0 242.3,62.4 245.0,61.4 247.6,60.5 250.1,60.1 252.5,59.7 251.7,59.0 250.9,58.3 255.2,55.9 253.2,55.4 251.3,54.9Z M268.0,126.5 265.4,128.7 266.5,129.3 267.5,129.3 268.0,130.6 270.6,130.7 271.5,131.4 270.4,132.7 272.1,133.0 270.3,134.7 272.1,134.7 272.0,136.0 270.4,138.4 269.3,138.4 269.1,136.6 268.1,137.8 266.4,137.7 265.3,137.7 265.9,136.3 264.3,135.8 261.9,135.8 259.3,135.6 257.8,135.8 259.7,133.6 258.8,133.2 261.1,131.4 262.3,130.2 264.7,127.3 266.4,125.4 269.2,124.9Z" fill="none" stroke="#f8bdb6" stroke-width="2.8"/>
<path d="M453.3,142.5 453.2,143.2 451.3,145.1 451.3,146.2 451.2,147.3 450.1,147.9 449.3,149.8 450.6,151.2 450.7,151.3 448.4,151.2 447.0,152.1 447.7,153.2 446.6,154.7 446.6,154.8 446.3,154.4 444.2,154.1 442.8,154.1 441.5,154.8 442.1,155.7 442.9,156.4 441.9,155.8 442.1,156.9 440.7,156.1 441.5,156.9 440.7,156.8 439.6,155.1 438.9,156.2 439.8,157.9 440.8,159.0 439.9,158.6 439.9,159.6 440.6,159.4 442.8,160.6 444.0,162.4 442.9,163.4 441.8,162.5 440.4,162.5 441.0,163.5 441.7,164.1 440.9,164.3 440.0,163.6 440.3,164.9 440.8,166.0 441.2,166.7 439.8,165.9 439.6,166.9 438.6,165.2 438.3,165.7 437.7,165.7 437.5,164.5 436.6,163.4 436.0,162.5 437.3,161.7 439.2,162.0 440.2,162.4 438.9,161.3 437.5,161.3 436.6,161.4 435.8,160.8 435.0,159.7 434.1,158.8 433.7,158.2 433.3,157.6 433.8,157.6 435.1,154.6 437.3,153.9 439.5,153.2 438.7,150.1 437.8,147.1 434.4,147.1 431.0,147.1 429.1,150.0 429.0,150.0 428.1,149.4 426.4,148.4 425.5,147.6 424.2,147.1 422.9,146.4 421.3,145.4 420.5,143.7 420.4,142.9 419.4,141.9 418.1,143.3 417.5,142.6 417.2,141.7 417.8,141.1 417.3,140.7 417.0,141.0 414.7,141.8 414.6,142.4 415.2,143.0 414.7,144.4 415.5,145.5 417.6,146.8 418.5,148.4 419.3,150.0 421.2,151.2 423.9,151.5 423.4,152.3 424.3,153.2 425.6,153.6 428.2,155.0 429.6,156.4 429.3,157.4 428.4,156.7 426.5,155.5 425.3,156.9 425.1,157.5 426.7,159.3 425.5,160.1 424.4,162.5 423.4,162.1 423.8,160.6 424.5,159.6 424.1,158.6 423.0,156.7 422.3,156.7 421.4,155.8 420.9,155.0 420.0,155.1 419.7,154.4 418.2,153.5 416.9,153.3 415.9,152.8 414.9,151.9 414.0,150.9 412.4,150.1 410.9,148.6 410.4,146.9 409.2,145.4 407.2,144.6 406.3,144.8 405.2,146.0 404.7,146.2 403.5,146.5 403.0,146.9 402.2,147.8 400.7,148.2 399.3,147.6 397.6,147.3 395.6,147.3 394.3,148.2 394.2,149.6 394.8,150.4 394.5,151.5 392.3,152.9 390.1,153.7 389.2,154.8 387.3,156.9 386.6,158.3 387.9,160.3 386.1,161.4 385.7,163.4 385.0,163.5 383.6,164.1 382.2,165.9 381.6,165.6 379.2,165.9 377.1,166.0 375.9,166.6 374.8,167.6 374.3,168.0 372.7,166.6 371.2,164.6 369.0,165.2 366.4,165.2 366.7,162.5 366.8,161.1 365.4,160.1 365.7,158.6 367.0,156.4 367.5,153.6 367.3,150.7 366.4,148.7 368.4,147.3 370.1,146.2 372.3,146.6 374.5,146.9 378.8,147.1 380.6,147.3 382.9,147.5 383.8,147.1 384.6,143.9 384.9,141.4 384.7,139.7 383.3,138.8 382.5,136.7 380.5,136.0 379.9,135.5 377.8,135.2 376.9,134.5 377.0,133.7 378.6,132.7 380.8,132.3 381.4,133.2 383.0,132.9 384.0,132.9 383.8,132.3 383.1,130.0 383.8,130.2 384.6,130.0 384.9,131.0 386.8,131.1 387.5,130.6 388.1,129.9 389.7,129.3 390.6,128.7 390.7,127.2 391.3,126.6 392.4,126.4 393.5,125.8 394.1,125.5 394.6,125.0 396.0,123.8 397.3,121.2 398.7,120.6 400.3,120.0 402.0,120.2 402.2,119.2 404.3,119.5 405.1,119.6 405.5,118.7 405.8,118.0 405.2,117.5 406.0,117.1 405.2,116.0 405.2,115.8 404.6,114.6 404.0,114.3 403.9,113.1 404.0,111.3 404.8,110.2 407.5,108.9 408.7,108.5 408.7,109.3 408.3,110.6 408.3,111.5 409.7,112.1 408.8,112.7 408.2,112.7 407.9,113.5 407.1,113.9 407.4,114.3 406.9,114.5 407.1,115.1 406.9,115.6 406.9,116.3 408.1,116.6 408.4,117.5 410.4,117.4 410.1,118.6 411.2,118.7 412.5,118.0 413.3,117.2 415.1,116.7 415.8,117.6 417.0,118.6 417.1,118.7 419.7,117.9 422.3,116.8 423.7,116.4 425.4,116.2 426.4,116.8 426.1,117.4 427.7,117.5 428.6,116.7 428.6,115.9 429.8,115.8 430.8,113.9 430.3,111.8 430.2,110.5 431.0,109.5 433.0,108.5 434.4,109.6 435.8,110.6 436.4,110.4 436.8,109.7 436.5,108.3 436.6,107.0 435.0,107.1 434.5,106.3 434.3,105.4 434.0,104.8 435.2,104.4 436.6,104.1 438.4,103.7 440.1,104.0 443.2,104.1 442.2,105.8 442.9,108.4 442.8,109.1 444.2,111.0 445.2,112.7 442.1,113.9 441.2,115.9 440.4,117.6 438.4,118.1 436.4,118.6 437.7,121.9 437.6,125.1 439.0,127.9 436.5,131.4 435.6,133.6 437.3,134.7 440.8,134.8 443.0,134.4 445.3,134.0 449.1,137.7 449.8,141.7 453.1,142.2 453.2,142.3Z M440.9,101.3 440.5,101.6 438.6,101.9 436.7,102.3 434.8,102.8 432.9,103.2 431.2,101.6 429.4,100.7 429.4,99.8 429.5,98.7 428.7,97.0 428.8,94.8 430.7,93.3 431.4,92.9 433.6,90.8 435.3,90.1 433.2,88.2 432.4,88.1 430.5,88.0 428.8,88.6 427.7,89.3 427.5,90.8 426.1,93.2 423.2,94.3 422.0,96.0 420.9,96.6 420.7,98.2 420.8,99.4 421.2,100.9 423.6,101.8 424.4,103.3 423.4,104.5 425.0,104.5 423.2,105.5 421.4,105.9 420.0,106.3 421.0,108.5 420.7,109.8 420.7,111.4 420.2,112.6 419.3,112.7 416.7,113.3 416.9,114.3 415.8,114.7 414.5,114.8 413.8,114.7 414.1,114.2 413.4,113.0 412.8,112.3 413.5,111.4 412.2,110.2 411.5,108.7 410.2,107.1 409.6,105.4 410.1,105.0 409.9,104.9 411.7,102.7 411.8,99.4 410.6,95.1 413.4,91.3 414.5,87.4 417.1,83.0 420.3,81.6 422.1,80.9 423.9,80.3 425.9,79.7 428.5,79.8 431.0,79.8 433.6,79.9 436.4,78.3 439.5,80.3 439.2,82.3 442.1,83.7 441.0,85.4 443.6,88.4 443.4,90.6 445.3,92.1 444.6,93.3 448.0,95.3 445.4,99.4 442.5,101.1Z M466.5,169.7 467.9,169.0 466.7,170.8 464.6,171.9 462.9,171.1 464.3,170.2Z M445.9,169.8 448.8,170.1 448.1,170.8 445.3,170.9 442.5,170.2 442.3,170.0 443.8,169.7Z M416.1,162.9 418.0,161.8 420.8,162.2 423.3,161.5 422.7,163.8 422.4,166.2 420.7,165.6 418.6,164.3 416.6,163.6Z M409.5,155.4 409.3,158.8 408.0,159.4 406.6,159.7 406.6,157.1 406.0,154.3 408.2,153.3Z M407.3,152.5 406.7,150.1 408.4,148.4 408.9,150.9 408.3,152.9Z M366.6,119.5 366.5,117.8 369.6,117.6 369.4,116.8 370.1,115.4 372.2,114.8 374.9,115.2 375.8,116.7 375.6,117.6 374.5,118.7 374.3,120.3 374.5,123.3 373.7,123.3 371.4,123.8 369.2,124.7 366.4,125.3 365.8,124.5 365.2,123.5 367.3,121.8 368.4,120.7Z M409.0,115.6 407.8,115.5 407.5,114.7 408.7,114.2 409.6,115.0Z M413.3,114.2 412.4,115.8 410.5,115.2 410.2,114.1 411.3,113.3 413.1,113.0Z M424.6,110.6 424.1,109.8 424.7,108.3 425.7,108.1 425.5,109.7Z" fill="none" stroke="#3054d8" stroke-width="2.9"/>
<path d="M7.7,212.2 9.2,213.3 9.6,214.3 7.3,215.9 6.8,214.9 6.8,213.8Z M202.5,209.6 204.7,211.0 206.7,212.2 204.5,213.2 200.9,213.1 197.9,213.3 199.3,211.5 197.0,210.7 195.8,208.6 192.2,208.0 189.9,207.0 187.8,206.0 185.3,207.0 183.3,207.6 180.9,207.7 183.6,205.3 186.1,204.5 188.6,203.9 192.0,204.2 194.4,205.9 198.0,206.5 200.2,208.2Z M189.4,248.2 186.6,247.9 185.2,246.9 184.0,246.1 182.3,246.5 181.3,245.5 180.3,245.5 179.4,242.7 177.9,241.3 177.1,242.3 175.3,240.2 175.6,238.5 175.4,237.5 174.0,236.0 172.5,234.0 171.8,232.9 171.1,232.0 168.7,232.0 166.2,230.9 163.9,230.1 161.4,228.9 160.2,227.8 156.7,224.2 153.8,223.7 150.5,225.1 149.2,224.6 145.8,223.3 142.6,221.8 138.8,219.7 137.4,218.7 134.4,217.7 132.7,215.6 131.2,214.3 129.9,211.8 131.0,211.1 131.4,208.7 129.5,203.9 126.5,200.3 126.5,199.4 124.4,197.2 123.3,194.1 123.0,193.3 121.5,190.7 119.5,188.2 119.3,185.1 118.7,183.2 118.0,181.2 115.5,179.8 114.8,182.0 114.9,185.4 116.0,187.8 117.0,190.5 117.7,192.3 118.3,193.5 119.2,196.1 120.0,199.2 120.6,201.1 122.0,202.5 122.0,204.2 120.9,204.8 120.3,203.2 117.5,200.6 116.1,199.4 116.6,198.3 116.3,196.1 114.2,194.1 112.4,192.7 111.5,190.9 113.9,190.5 114.1,189.1 113.0,186.8 111.5,184.8 111.0,182.6 111.3,179.6 110.8,177.8 110.6,177.3 110.0,174.7 109.0,174.3 108.3,173.6 106.7,172.5 105.0,172.3 104.8,171.9 105.0,169.8 104.3,169.0 103.7,167.1 104.1,166.3 104.2,162.9 103.3,162.4 103.0,159.7 103.5,158.2 103.5,155.5 105.9,151.9 106.9,148.9 108.2,147.5 110.8,144.0 111.6,142.9 113.7,139.5 114.6,137.5 114.9,136.0 115.8,133.6 119.6,134.4 119.7,135.8 121.2,132.6 121.2,131.9 120.9,131.1 118.9,129.6 118.1,129.2 116.9,127.9 114.4,126.1 115.1,125.1 115.2,123.0 115.7,121.1 115.7,119.8 115.8,117.6 115.2,116.6 111.6,116.7 111.0,115.2 111.6,113.7 110.9,112.7 111.0,110.5 112.1,107.4 110.6,105.0 109.1,103.9 106.8,102.8 104.4,102.8 102.0,102.7 100.1,101.3 100.3,99.9 97.6,100.3 94.9,100.7 93.5,102.7 91.1,102.8 87.4,104.3 84.1,104.8 86.0,103.7 89.1,101.3 91.6,100.8 94.2,100.4 93.5,99.6 89.4,100.1 86.6,101.4 83.9,103.0 80.4,104.5 80.3,105.7 76.6,107.4 74.2,108.1 70.7,109.5 67.0,111.0 62.7,112.3 61.7,113.1 57.8,113.9 54.7,114.8 51.2,115.6 47.4,116.8 44.5,116.8 48.9,115.6 51.2,114.7 53.7,113.9 57.6,113.1 59.5,112.3 64.0,110.6 67.0,109.2 70.0,107.4 72.6,105.9 69.7,105.8 67.8,106.6 66.0,105.5 61.9,106.2 64.3,104.8 66.3,102.7 65.2,102.8 62.0,103.0 61.8,101.2 62.9,98.9 63.9,98.1 67.0,96.8 70.4,95.1 73.0,94.8 77.2,93.8 80.7,92.8 81.9,91.6 83.2,90.6 80.8,91.0 78.5,91.3 76.2,91.3 73.9,91.3 73.1,91.1 74.3,89.5 72.5,88.6 75.4,87.8 78.4,87.0 81.2,86.7 84.0,86.3 82.7,87.4 85.2,87.3 87.7,87.1 87.7,86.4 87.3,85.3 85.8,84.8 86.2,83.4 86.3,82.8 84.2,81.9 87.1,80.7 90.6,80.4 95.8,78.6 99.7,77.3 104.2,76.5 106.4,76.2 108.6,75.9 113.0,74.8 114.6,76.1 116.6,76.1 118.5,76.2 120.6,76.9 122.1,77.0 123.6,77.2 125.6,77.4 127.6,77.6 129.5,77.7 131.4,77.8 133.1,78.3 134.9,78.9 136.5,79.0 138.2,79.1 139.5,79.9 140.8,80.6 143.7,79.7 146.2,79.5 148.6,79.3 150.6,79.2 152.6,79.0 154.7,78.7 156.8,78.5 160.6,76.8 160.9,78.0 162.2,79.2 165.5,77.6 166.9,78.0 168.4,78.5 170.1,79.0 171.8,79.4 173.9,80.0 176.0,80.6 177.7,81.2 179.3,81.8 176.8,83.3 179.5,83.5 181.9,83.4 184.2,83.4 186.3,83.1 188.4,82.8 189.1,84.0 191.6,81.3 192.7,82.1 195.1,82.4 197.5,82.8 199.6,83.0 201.7,83.3 204.0,83.3 206.3,83.3 210.4,81.6 211.7,82.2 213.1,82.8 215.9,81.6 215.6,79.7 214.4,81.1 212.5,81.2 210.6,81.3 209.2,80.9 207.8,80.4 211.3,78.5 213.2,78.4 215.0,78.3 215.4,78.9 215.2,78.0 218.2,75.7 222.9,73.4 224.3,74.2 225.8,75.0 224.5,77.6 225.9,79.2 226.9,80.2 228.0,81.1 226.0,83.3 227.3,84.5 230.4,82.8 233.1,80.4 236.4,78.4 238.4,78.9 240.4,79.4 239.8,81.6 236.9,85.2 234.1,86.0 231.1,86.9 229.3,86.9 227.4,86.4 223.7,89.6 220.0,92.1 217.8,92.6 213.4,94.2 209.7,95.6 206.6,97.6 202.8,99.9 199.7,102.7 198.5,105.9 200.5,105.9 199.3,110.5 202.3,110.0 204.1,110.4 205.8,110.9 207.3,113.1 209.0,113.9 210.8,114.7 213.7,115.0 217.0,115.4 215.6,118.4 214.0,121.1 215.4,123.8 215.4,125.7 217.0,126.2 219.2,125.1 221.0,123.1 221.4,121.1 222.0,119.0 221.6,116.7 223.2,116.6 226.5,115.0 230.6,112.3 231.3,110.5 231.2,109.2 230.3,106.7 231.3,105.3 234.2,102.6 234.5,100.7 234.8,98.9 236.5,96.6 237.4,96.3 240.7,97.1 244.4,96.6 246.3,97.9 247.8,98.6 250.9,99.9 249.3,103.0 248.1,105.7 250.7,106.5 254.8,105.9 256.3,105.3 258.4,103.0 260.1,101.8 260.9,104.0 261.7,106.6 262.6,109.2 261.2,111.7 263.1,114.6 264.8,115.5 265.9,116.3 267.4,117.9 266.1,118.4 267.9,119.2 268.9,119.5 269.8,121.1 269.5,123.1 268.7,123.8 265.5,125.4 261.0,127.0 258.4,128.4 254.4,128.7 252.1,128.5 249.8,128.4 247.1,128.5 244.5,128.7 241.5,131.1 239.7,131.4 235.3,134.3 233.6,136.0 232.5,137.1 235.4,135.1 238.1,133.4 240.7,132.3 243.3,131.5 245.5,131.2 247.9,132.6 245.5,134.5 242.6,134.5 244.1,135.5 245.7,135.2 244.6,137.1 245.0,139.5 246.3,140.2 248.9,141.0 251.2,141.1 251.3,140.4 253.0,138.5 254.5,137.4 255.3,139.7 254.6,140.4 251.9,141.9 249.4,142.9 245.7,144.0 242.0,146.2 240.1,147.2 239.2,146.2 240.6,144.0 243.5,141.9 244.0,141.0 240.7,142.2 238.2,143.2 236.1,144.3 233.8,144.6 233.0,145.7 230.0,146.6 228.3,148.3 228.2,149.4 227.0,150.3 227.4,151.4 227.6,151.8 228.5,151.1 228.8,152.1 227.1,152.5 226.0,152.6 225.0,152.9 221.7,153.3 223.9,153.9 221.3,154.7 218.9,154.8 218.5,155.5 216.6,158.6 215.1,159.7 214.1,158.5 214.6,160.1 214.3,161.3 213.2,162.4 211.3,164.8 211.8,161.8 211.7,159.0 210.9,162.4 210.3,165.2 211.0,165.6 211.1,167.4 210.9,170.1 208.0,171.9 204.1,174.0 201.4,175.0 198.8,177.1 195.9,179.2 193.6,183.9 193.9,187.1 194.5,189.2 194.8,194.1 194.2,196.6 193.3,198.3 191.6,198.5 190.3,195.8 190.0,194.8 189.5,193.5 188.9,191.0 189.4,189.3 189.0,187.2 188.3,186.2 186.8,184.7 183.8,185.7 183.2,184.6 182.7,183.9 179.8,183.9 177.9,184.0 175.3,183.9 174.0,184.6 174.4,186.8 173.7,187.6 171.1,187.4 169.0,186.5 166.7,186.1 163.6,185.7 161.0,186.8 159.6,187.8 156.6,189.3 154.3,191.0 153.5,193.3 153.3,196.2 151.9,198.9 150.6,203.1 149.8,206.6 150.8,210.4 152.1,213.2 152.7,215.2 154.8,216.6 156.5,218.1 161.0,217.0 163.1,216.7 166.0,214.8 166.6,213.3 167.3,210.5 169.3,209.3 173.0,208.4 175.7,208.4 176.2,209.7 174.3,212.4 173.9,214.3 172.7,217.7 172.0,218.0 171.5,219.9 171.0,221.4 169.5,223.9 169.6,224.6 171.5,224.6 174.3,224.7 176.3,224.4 178.8,224.3 181.2,224.7 183.1,227.0 182.2,229.8 181.7,232.6 180.8,235.4 181.0,238.5 182.2,241.0 184.2,243.0 187.1,244.4 189.9,242.8 192.1,242.3 194.8,243.0 196.1,244.8 197.3,246.6 197.5,244.9 198.5,244.0 200.3,242.7 200.8,239.9 202.6,238.1 204.3,237.5 207.5,236.7 209.3,235.7 210.8,234.1 212.0,235.4 209.9,236.5 210.6,238.3 212.1,238.2 214.2,236.5 214.8,234.8 215.2,236.8 215.6,236.9 217.6,237.1 218.8,238.5 219.4,239.6 222.2,239.3 224.3,239.3 226.5,240.7 227.5,240.6 228.8,239.7 231.8,239.0 234.5,239.0 232.7,240.5 235.4,241.6 236.8,243.0 238.9,245.1 239.4,245.8 241.8,248.0 243.4,250.0 245.6,252.2 248.6,252.7 250.7,252.5 253.6,252.8 256.0,253.8 257.7,255.3 259.4,256.7 260.6,258.1 261.6,262.6 263.3,264.3 263.3,266.3 262.3,268.5 264.5,269.1 267.2,269.9 267.5,271.9 268.2,271.1 269.8,270.8 273.2,272.2 275.7,273.3 277.4,276.1 279.7,275.8 283.2,277.0 283.9,277.2 286.9,277.1 287.9,277.1 290.1,278.1 291.9,279.5 294.4,282.0 295.1,282.6 297.4,283.4 299.8,283.7 300.1,285.4 300.8,287.4 301.2,289.2 301.0,291.7 300.3,294.4 299.1,296.2 297.4,298.6 295.9,299.9 294.6,302.2 292.5,305.6 291.4,308.4 291.5,310.7 291.7,315.2 291.4,319.0 290.3,321.3 290.4,324.2 289.1,326.1 287.9,328.9 287.7,330.9 285.5,333.4 282.6,333.6 279.5,334.3 277.4,335.9 275.3,336.5 271.7,339.3 270.3,340.7 270.3,342.7 271.0,346.6 270.9,349.1 268.7,351.4 268.0,353.4 266.9,356.2 264.1,359.5 261.8,363.9 261.2,365.7 258.7,367.3 255.8,367.1 251.7,365.9 250.2,364.6 250.5,366.3 251.8,367.0 253.9,368.7 253.7,370.2 255.4,371.2 254.4,375.8 252.0,377.5 248.2,378.5 244.3,378.2 245.2,380.8 245.3,383.1 244.5,384.3 242.3,384.6 239.4,383.5 240.2,387.0 242.4,387.3 243.9,388.6 242.3,389.5 241.2,390.3 241.7,393.9 241.0,394.7 239.5,395.6 238.0,397.6 238.5,399.1 241.0,400.8 243.2,402.9 242.1,405.2 241.0,407.1 239.2,409.8 240.5,413.5 242.6,415.3 242.5,416.2 245.7,419.2 248.9,421.0 251.9,421.5 249.6,422.6 249.0,425.0 246.4,424.1 243.7,423.2 240.1,422.2 237.4,420.8 233.3,417.9 229.0,414.9 226.1,411.2 224.2,407.6 222.3,403.5 221.0,400.2 222.1,396.7 221.3,392.5 220.7,390.6 219.7,386.6 219.5,384.2 219.2,381.4 219.3,381.0 218.0,377.2 216.9,374.7 217.6,372.3 217.8,368.8 218.6,366.0 218.4,361.9 218.1,359.0 217.7,356.1 217.3,353.2 216.4,350.3 216.5,347.7 217.1,345.1 217.3,343.1 217.3,340.4 216.9,335.5 216.4,334.0 216.9,331.2 216.4,325.8 215.5,321.1 212.7,318.7 211.0,316.8 209.2,315.9 205.1,313.6 202.8,312.2 199.6,308.1 199.7,306.7 197.3,302.9 195.8,300.3 194.2,297.2 193.0,294.7 191.8,292.0 189.5,288.5 186.4,285.4 186.4,283.4 185.8,282.2 187.7,278.9 189.2,276.1 188.2,276.7 186.4,275.3 187.0,271.8 187.6,270.1 188.7,268.8 189.7,266.3 191.8,264.0 192.9,261.8 196.2,258.3 195.2,257.3 195.2,253.7 195.8,250.6 194.5,248.9 193.8,248.0 193.4,246.5 193.2,245.2 190.8,244.0 188.5,246.1Z M200.6,151.2 199.4,150.9 198.3,152.1 200.0,152.9 202.5,152.3 205.6,151.2 209.6,148.9 208.3,148.9 205.7,149.7 203.5,149.6Z M212.8,145.8 209.9,146.4 208.1,147.6 209.8,147.8 213.2,147.8 216.1,147.1 217.0,145.4 215.0,145.8Z M190.0,147.9 189.0,150.4 188.8,152.1 190.4,151.9 192.6,149.8 193.5,146.5 195.6,143.5 197.2,142.9 199.1,141.0 199.8,140.3 198.1,140.2 195.9,140.7 194.5,141.3 192.6,142.6 191.2,144.0 191.9,144.8Z M204.0,139.9 201.8,139.9 199.9,140.6 202.0,142.1 201.7,143.7 199.5,146.1 200.2,146.5 202.2,146.0 201.9,148.4 203.7,147.6 204.9,144.8 206.7,142.4 207.0,144.0 209.6,143.5 209.7,142.1 208.6,140.4 206.7,140.2Z M192.4,134.7 189.3,135.8 184.7,138.1 188.1,138.2 191.8,137.4 194.1,136.2 194.6,138.6 197.9,138.6 200.5,138.8 201.5,137.4 200.0,134.8 199.4,132.6 195.7,132.2Z M250.6,138.9 249.2,140.2 246.6,139.7 245.5,138.5 248.4,139.1Z M248.3,129.6 251.6,130.0 253.6,131.7 251.0,131.1Z M118.2,129.8 119.1,132.2 118.7,133.6 116.0,133.0 114.5,131.9 113.7,130.6 112.3,128.9 112.3,127.2 114.8,126.9 117.2,128.4Z M108.5,122.2 108.3,120.0 109.7,118.2 112.0,118.4 110.2,120.8 109.5,123.3Z M73.2,110.8 74.1,109.2 77.9,108.0 79.6,108.0 78.5,109.2 75.6,110.2Z M56.2,102.2 59.2,101.7 58.7,103.0 56.0,103.3Z M63.7,94.3 61.0,95.1 59.3,94.3 58.3,94.1 61.9,93.3Z M233.3,92.1 234.2,93.1 231.2,92.8 228.3,92.6 225.7,93.6 223.1,94.6 220.3,93.6 224.0,91.8 227.5,88.1 229.5,89.3 230.9,90.0 232.4,90.6Z M247.5,89.1 250.3,86.9 253.4,84.5 252.2,83.3 250.9,82.1 249.9,80.9 248.9,79.7 247.7,78.9 246.4,78.0 244.1,78.0 241.7,78.0 239.3,78.0 237.1,78.0 234.9,78.0 232.6,77.6 230.3,77.1 229.5,75.0 232.0,73.0 234.9,70.7 238.5,70.0 242.0,69.3 245.0,69.4 247.9,69.5 248.9,71.4 250.2,71.4 249.3,70.2 253.0,69.5 254.5,69.7 255.9,70.0 255.7,71.4 253.7,71.5 256.3,71.8 257.2,72.8 258.2,73.9 259.9,74.6 261.7,75.2 263.4,75.9 265.2,76.6 266.5,78.7 265.3,80.9 267.3,82.1 269.4,83.3 271.1,84.2 272.9,85.2 273.0,86.9 270.3,88.5 267.6,90.1 265.1,89.5 262.6,88.9 261.7,87.1 261.0,90.1 262.2,91.3 263.5,92.6 262.6,95.1 259.6,94.6 260.4,96.8 261.1,98.6 259.0,97.6 257.3,97.1 255.7,96.6 253.2,95.8 250.7,95.1 248.8,93.3 247.4,92.4 246.0,91.6 243.1,91.7 240.1,91.8 240.3,90.1 243.9,89.6Z M184.8,77.3 182.0,77.0 179.3,76.6 179.3,75.0 184.2,72.3 188.0,71.6 191.8,70.9 193.8,71.1 195.8,71.4 197.9,71.6 201.0,71.1 204.0,70.7 205.1,71.3 206.3,71.8 202.6,74.6 202.8,76.2 204.5,77.1 206.3,78.0 203.7,79.0 205.1,80.4 202.0,80.9 199.8,80.8 197.7,80.6 195.4,80.6 193.2,80.6 190.0,81.1 186.8,81.6 184.1,81.6 181.4,81.6 180.4,80.8 179.4,79.9 178.5,78.3 181.6,77.8Z M212.7,75.0 212.0,73.9 211.4,72.7 211.3,71.1 214.5,70.1 217.6,69.1 219.3,69.1 221.0,69.1 220.3,71.6 217.7,74.3 215.2,74.7Z M175.8,75.0 173.3,75.2 170.9,75.5 169.6,74.5 168.3,73.5 174.9,70.0 179.5,68.5 182.4,68.5 185.4,68.5 187.1,69.5 188.9,70.5 184.6,71.9 180.3,73.4Z M225.3,69.1 228.4,69.0 231.4,68.9 233.1,69.8 228.7,71.8 224.6,73.4 223.3,73.0 222.0,72.5Z M252.0,64.9 253.3,65.3 254.7,65.6 252.9,67.6 250.6,67.6 248.3,67.7 246.0,67.8 243.7,67.8 241.5,67.8 239.2,67.8 237.1,67.6 235.1,67.5 233.0,67.4 236.4,64.1 238.9,63.6 241.4,63.2 243.3,64.2 245.1,65.2 247.4,65.1 249.7,65.0Z M210.2,66.7 207.6,67.1 204.9,67.4 202.2,67.8 199.2,67.9 196.1,68.0 194.7,67.1 193.3,66.3 194.8,64.5 197.7,64.2 200.7,63.8 203.6,63.4 206.8,63.2 209.9,63.0 211.4,63.8 212.9,64.5Z M216.2,64.5 220.7,62.8 223.3,63.0 225.9,63.2 225.6,64.9 222.8,66.7 220.3,66.7 217.8,66.7 216.9,65.6Z M185.9,63.9 190.0,62.7 194.2,61.5 196.3,61.7 198.4,61.9 194.6,64.1 192.2,64.3 189.9,64.5 187.9,64.2Z M230.0,57.5 230.3,59.1 229.3,60.5 226.9,60.5 224.5,60.5 222.1,60.5 222.7,58.3 225.2,58.0 227.6,57.7Z M242.0,59.9 240.7,59.1 239.5,58.4 238.3,57.7 242.1,55.4 245.0,54.9 247.8,54.5 249.2,55.2 250.6,55.9 249.8,57.9 249.3,59.7 246.9,59.7 244.4,59.8Z M255.2,55.9 253.2,55.4 251.3,54.9 249.4,54.5 253.1,52.7 255.9,52.4 258.7,52.1 261.4,51.8 264.1,51.5 266.9,51.2 269.4,51.1 271.9,51.1 274.4,51.0 276.9,51.0 279.4,50.9 281.9,50.9 284.0,51.1 286.2,51.2 288.3,51.4 290.5,51.6 292.7,51.8 293.7,52.3 294.7,52.9 292.3,53.4 289.8,53.9 287.3,54.5 284.3,55.2 281.3,55.9 277.9,56.7 274.4,57.5 271.1,58.1 267.8,58.7 267.0,60.3 263.8,61.1 260.6,61.9 257.9,63.9 255.8,63.8 253.7,63.7 251.6,63.6 249.1,63.6 246.7,63.6 244.2,63.6 243.3,63.0 242.3,62.4 245.0,61.4 247.6,60.5 250.1,60.1 252.5,59.7 251.7,59.0 250.9,58.3Z M508.2,318.0 508.1,320.1 506.9,323.0 506.2,325.3 504.9,328.8 503.3,333.1 501.7,336.5 500.8,339.5 499.0,340.2 496.1,341.0 493.5,339.3 493.0,334.7 492.3,331.5 492.6,330.2 493.9,327.5 495.2,326.1 495.6,323.9 494.9,319.8 494.9,318.0 496.3,314.6 498.4,314.0 500.9,313.2 502.7,311.8 504.0,310.7 505.4,307.9 506.2,306.7 507.5,305.1 508.7,302.7 509.9,305.3 510.4,306.7 510.7,309.3 511.3,312.1 510.4,313.9 509.3,312.6 509.2,315.7Z M639.5,264.0 642.3,266.3 644.1,267.7 644.8,269.7 644.1,271.9 646.5,272.5 647.2,275.0 649.9,276.3 648.9,275.3 648.2,273.9 650.7,273.6 652.1,276.4 651.1,277.5 650.2,276.5 650.1,278.4 649.5,281.2 649.5,285.5 647.4,285.4 646.2,284.5 645.0,282.9 642.3,281.2 640.9,280.1 639.2,278.1 637.8,275.6 636.4,271.9 635.2,269.7 633.2,268.3 632.4,264.3 629.6,262.4 627.8,259.8 626.0,258.1 623.7,255.6 623.4,253.4 625.1,254.2 628.8,254.5 630.9,257.3 633.0,259.3 635.3,261.2 637.3,263.2Z M399.1,165.7 403.3,165.3 405.4,165.5 407.7,165.2 410.2,164.3 412.8,164.9 411.9,166.9 412.0,168.6 413.2,170.2 412.6,171.6 411.0,173.9 413.4,175.0 416.1,176.7 418.4,176.7 421.1,177.5 423.2,178.1 424.0,180.3 426.7,181.5 429.6,182.3 432.7,184.0 434.8,182.6 434.7,180.6 434.8,178.9 436.4,177.3 438.9,176.7 440.6,177.0 442.1,178.4 444.1,179.1 447.0,180.3 449.4,180.6 451.8,180.9 455.9,182.5 458.2,181.5 459.3,180.6 461.0,180.3 462.7,180.6 463.9,181.2 467.5,181.6 468.9,180.6 469.5,179.1 469.9,177.0 470.2,175.7 470.7,173.9 471.2,172.3 471.3,171.1 470.7,169.4 471.0,167.7 471.3,166.3 470.0,166.3 469.6,166.4 467.6,165.7 466.3,167.1 463.8,167.8 461.7,166.4 458.5,165.5 458.3,167.1 457.4,167.1 456.3,167.4 454.9,166.2 452.9,165.6 450.9,166.0 450.8,165.0 450.3,162.8 447.9,161.5 449.7,161.1 449.0,160.4 449.1,159.3 448.6,158.8 449.2,157.9 447.0,158.2 447.2,156.7 448.9,155.7 451.1,155.8 453.2,155.7 454.1,155.0 455.4,154.7 453.4,154.0 454.6,153.5 456.2,153.5 458.6,153.2 459.5,152.8 460.7,151.9 463.7,151.3 466.8,151.1 468.9,152.1 469.9,153.2 471.4,153.5 473.5,154.0 474.7,154.1 477.6,154.0 479.4,153.9 481.3,152.9 481.6,152.2 481.5,150.8 479.5,148.4 476.3,146.8 474.6,145.4 471.5,143.7 470.3,143.2 468.8,142.5 470.3,142.1 471.1,140.2 471.5,138.2 473.5,136.9 472.6,136.9 469.7,137.1 468.3,138.1 465.2,139.3 464.1,139.7 465.6,141.8 468.3,141.9 466.0,142.8 465.2,143.3 463.5,144.3 462.0,144.0 461.4,142.4 459.4,141.9 460.3,140.7 461.5,139.9 460.0,139.9 456.7,138.6 457.8,138.5 456.8,138.5 455.1,138.8 454.7,139.9 453.2,141.7 453.3,142.5 453.2,143.2 451.3,145.1 451.3,146.2 451.2,147.3 450.1,147.9 449.3,149.8 450.6,151.2 451.0,152.2 453.2,153.3 453.2,154.0 451.5,153.9 449.9,154.1 449.1,155.1 448.1,155.7 447.2,156.6 448.4,155.1 446.7,154.8 446.3,154.4 444.2,154.1 442.8,154.1 441.5,154.8 442.1,155.7 442.9,156.4 441.9,155.8 442.1,156.9 440.7,156.1 441.5,156.9 440.7,156.8 439.6,155.1 438.9,156.2 439.8,157.9 440.8,159.0 439.9,158.6 439.9,159.6 440.6,159.4 442.8,160.6 444.0,162.4 442.9,163.4 441.8,162.5 440.4,162.5 441.0,163.5 441.7,164.1 440.9,164.3 440.0,163.6 440.3,164.9 440.8,166.0 441.2,166.7 439.8,165.9 439.6,166.9 438.6,165.2 438.3,165.7 437.7,165.7 437.5,164.5 436.6,163.4 436.0,162.5 437.3,161.7 439.2,162.0 440.2,162.4 438.9,161.3 437.5,161.3 436.6,161.4 435.8,160.8 435.0,159.7 434.1,158.8 433.7,158.2 433.1,157.2 432.4,156.5 431.6,155.5 431.3,155.0 431.5,153.2 431.7,151.8 430.8,151.5 430.5,150.9 429.2,150.1 428.1,149.4 426.4,148.4 425.5,147.6 424.2,147.1 422.9,146.4 421.3,145.4 420.5,143.7 420.4,142.9 419.4,141.9 418.1,143.3 417.5,142.6 417.2,141.7 417.8,141.1 417.3,140.7 417.0,141.0 414.7,141.8 414.6,142.4 415.2,143.0 414.7,144.4 415.5,145.5 417.6,146.8 418.5,148.4 419.3,150.0 421.2,151.2 423.9,151.5 423.4,152.3 424.3,153.2 425.6,153.6 428.2,155.0 429.6,156.4 429.3,157.4 428.4,156.7 426.5,155.5 425.3,156.9 425.1,157.5 426.7,159.3 425.5,160.1 424.4,162.5 423.4,162.1 423.8,160.6 424.5,159.6 424.1,158.6 423.0,156.7 422.3,156.7 421.4,155.8 420.9,155.0 420.0,155.1 419.7,154.4 418.2,153.5 416.9,153.3 415.9,152.8 414.9,151.9 414.0,150.9 412.4,150.1 410.9,148.6 410.4,146.9 409.2,145.4 407.2,144.6 406.3,144.8 405.2,146.0 404.7,146.2 403.5,146.5 403.0,146.9 402.2,147.8 400.7,148.2 399.3,147.6 397.6,147.3 395.6,147.3 394.3,148.2 394.2,149.6 394.8,150.4 394.5,151.5 392.3,152.9 390.1,153.7 389.2,154.8 387.3,156.9 386.6,158.3 387.9,160.3 386.1,161.4 385.7,163.4 385.0,163.5 383.6,164.1 382.2,165.9 381.6,165.6 379.2,165.9 377.1,166.0 375.9,166.6 374.8,167.6 374.3,168.0 372.7,166.6 371.2,164.6 369.0,165.2 366.4,165.2 366.7,162.5 366.8,161.1 365.4,160.1 365.7,158.6 367.0,156.4 367.5,153.6 367.3,150.7 366.4,148.7 368.4,147.3 370.1,146.2 372.3,146.6 374.5,146.9 378.8,147.1 380.6,147.3 382.9,147.5 383.8,147.1 384.6,143.9 384.9,141.4 384.7,139.7 383.3,138.8 382.5,136.7 380.5,136.0 379.9,135.5 377.8,135.2 376.9,134.5 377.0,133.7 378.6,132.7 380.8,132.3 381.4,133.2 383.0,132.9 384.0,132.9 383.8,132.3 383.1,130.0 383.8,130.2 384.6,130.0 384.9,131.0 386.8,131.1 387.5,130.6 388.1,129.9 389.7,129.3 390.6,128.7 390.7,127.2 391.3,126.6 392.4,126.4 393.5,125.8 394.1,125.5 394.6,125.0 396.0,123.8 397.3,121.2 398.7,120.6 400.3,120.0 402.0,120.2 402.2,119.2 404.3,119.5 405.1,119.6 405.5,118.7 405.8,118.0 405.2,117.5 406.0,117.1 405.2,116.0 405.2,115.8 404.6,114.6 404.0,114.3 403.9,113.1 404.0,111.3 404.8,110.2 407.5,108.9 408.7,108.5 408.7,109.3 408.3,110.6 408.3,111.5 409.7,112.1 408.8,112.7 408.2,112.7 407.9,113.5 407.1,113.9 407.4,114.3 406.9,114.5 407.1,115.1 406.9,115.6 406.9,116.3 408.1,116.6 408.4,117.5 410.4,117.4 410.1,118.6 411.2,118.7 412.5,118.0 413.3,117.2 415.1,116.7 415.8,117.6 417.0,118.6 417.1,118.7 419.7,117.9 422.3,116.8 423.7,116.4 425.4,116.2 426.4,116.8 426.1,117.4 427.7,117.5 428.6,116.7 428.6,115.9 429.8,115.8 430.8,113.9 430.3,111.8 430.2,110.5 431.0,109.5 433.0,108.5 434.4,109.6 435.8,110.6 436.4,110.4 436.8,109.7 436.5,108.3 436.6,107.0 435.0,107.1 434.5,106.3 434.3,105.4 434.0,104.8 435.2,104.4 436.6,104.1 438.4,103.7 440.1,104.0 443.2,104.1 443.7,103.5 445.0,102.8 447.2,102.8 444.7,102.2 443.8,100.9 440.9,101.3 440.5,101.6 438.6,101.9 436.7,102.3 434.8,102.8 432.9,103.2 431.2,101.6 429.4,100.7 429.4,99.8 429.5,98.7 428.7,97.0 428.8,94.8 430.7,93.3 431.4,92.9 433.6,90.8 435.3,90.1 433.2,88.2 432.4,88.1 430.5,88.0 428.8,88.6 427.7,89.3 427.5,90.8 426.1,93.2 423.2,94.3 422.0,96.0 420.9,96.6 420.7,98.2 420.8,99.4 421.2,100.9 423.6,101.8 424.4,103.3 423.4,104.5 425.0,104.5 423.2,105.5 421.4,105.9 420.0,106.3 421.0,108.5 420.7,109.8 420.7,111.4 420.2,112.6 419.3,112.7 416.7,113.3 416.9,114.3 415.8,114.7 414.5,114.8 413.8,114.7 414.1,114.2 413.4,113.0 412.8,112.3 413.5,111.4 412.2,110.2 411.5,108.7 410.2,107.1 409.6,105.4 410.1,105.0 408.5,103.0 408.1,104.8 407.4,105.3 406.1,105.7 404.9,106.7 403.4,107.5 401.5,107.9 400.5,107.6 399.4,106.7 398.5,105.4 397.8,104.3 397.6,101.7 397.1,101.2 396.9,100.0 397.1,98.6 397.3,97.1 399.1,96.3 400.8,95.6 402.1,94.8 403.6,93.8 405.6,93.3 406.7,92.1 408.1,91.3 408.4,90.5 410.2,88.9 410.8,87.6 411.4,86.2 413.8,84.5 415.4,82.8 413.8,82.3 411.0,83.0 412.4,82.1 414.1,80.9 416.2,79.7 417.8,79.4 419.4,79.0 421.1,78.7 422.0,77.8 424.3,77.6 425.5,77.2 427.4,76.9 429.2,76.5 431.0,75.9 432.7,75.4 436.0,75.5 438.7,76.1 440.6,76.6 442.5,77.2 440.3,77.9 438.1,77.7 441.0,78.6 443.2,78.9 444.4,78.2 446.5,79.2 447.6,79.9 450.5,79.9 453.2,80.6 456.4,82.1 459.3,82.7 463.0,85.0 463.7,86.4 462.6,86.4 460.9,87.4 458.1,87.5 455.3,86.9 453.1,86.4 450.8,85.9 447.0,84.8 448.5,86.4 452.9,90.2 453.2,91.3 455.9,92.6 457.8,92.8 459.9,92.8 457.5,91.6 456.1,90.1 456.6,89.7 459.0,90.5 462.4,91.1 464.0,91.2 462.3,88.9 463.7,87.4 465.6,86.4 467.8,86.9 469.7,87.6 469.1,86.9 469.5,85.4 467.8,84.5 467.2,82.8 465.7,81.2 467.4,81.5 469.8,81.6 472.3,83.3 471.2,85.0 473.2,85.6 475.4,85.4 476.2,83.7 478.3,82.8 480.0,82.2 481.6,81.6 484.5,80.6 485.9,82.1 488.2,81.7 490.6,81.3 492.0,80.6 495.4,81.8 496.6,80.6 495.5,78.7 497.6,78.6 500.5,79.3 503.4,79.9 506.8,81.1 508.9,81.7 511.1,82.3 511.0,80.6 508.7,79.2 506.8,78.7 505.9,76.9 504.8,75.7 504.7,73.4 505.3,71.4 506.7,71.1 508.5,71.3 510.3,71.4 513.5,73.0 515.7,75.7 516.4,78.0 519.0,80.4 520.8,81.6 520.8,83.5 520.1,85.7 521.7,86.9 523.0,85.4 522.8,83.5 522.8,81.6 520.8,80.4 518.9,78.0 518.2,75.7 517.6,73.4 519.0,72.7 521.3,72.3 522.8,73.2 525.1,72.7 527.7,73.4 530.2,74.1 529.9,73.0 524.6,70.0 526.2,68.9 528.3,68.3 530.3,67.8 533.9,68.9 532.6,66.7 534.5,66.0 536.3,65.4 538.3,64.9 540.3,64.5 542.7,64.4 545.0,64.3 547.2,64.1 549.4,63.9 550.6,63.4 551.2,62.6 551.7,61.7 553.0,61.3 554.3,60.9 557.9,61.5 562.3,63.0 565.1,63.0 568.0,63.0 570.6,63.8 573.2,64.5 576.0,66.0 575.7,67.8 574.7,68.3 573.7,68.9 572.1,69.8 570.6,70.7 572.8,70.4 575.0,70.0 577.0,69.6 579.0,69.1 581.2,70.2 582.4,69.8 585.4,69.9 588.5,69.9 593.0,71.1 594.9,71.1 596.8,71.1 597.7,69.8 599.8,69.5 601.9,69.1 604.5,69.8 607.1,70.5 611.2,72.3 612.6,74.2 616.3,75.7 618.6,76.2 619.0,74.3 618.5,73.5 623.1,74.8 624.7,74.7 626.3,74.6 627.9,74.4 629.5,74.3 628.8,72.5 629.4,71.5 631.9,72.3 633.9,72.2 635.9,72.0 638.6,72.4 641.2,72.7 643.7,73.0 646.2,73.2 650.8,74.6 653.5,75.2 656.3,75.9 658.7,75.8 661.1,75.6 663.4,75.7 665.8,75.8 668.7,76.6 671.6,77.3 676.2,79.0 678.2,78.9 680.7,78.7 683.3,79.0 685.9,79.2 687.0,78.2 690.5,79.3 694.0,80.4 692.0,78.7 691.1,77.8 693.7,78.1 696.3,78.4 698.7,78.4 701.2,78.3 704.5,78.9 707.8,79.4 712.1,80.4 719.2,85.1 726.2,89.8 725.2,91.1 722.7,90.7 723.4,91.8 729.4,94.1 732.6,95.3 734.3,96.8 732.1,96.7 729.9,96.6 727.6,97.5 725.8,98.6 725.2,100.4 724.9,102.8 721.9,102.3 718.9,101.7 717.1,101.8 715.3,101.9 717.2,103.2 714.3,101.9 712.9,103.2 713.7,105.3 716.3,107.9 715.2,108.7 717.5,108.4 719.2,110.5 722.2,112.6 720.5,112.6 721.3,114.5 723.8,116.4 722.2,117.1 721.5,118.4 724.2,120.8 721.5,121.1 723.2,123.8 722.8,125.1 722.6,126.8 719.0,123.8 714.5,119.8 709.7,115.8 705.8,111.8 705.2,109.2 706.2,107.4 706.0,104.5 705.3,102.7 706.6,101.4 705.6,98.9 704.8,96.6 703.5,97.6 703.6,100.4 702.9,101.2 698.2,98.4 696.2,98.7 694.2,99.1 694.8,102.2 694.9,104.0 697.4,105.0 695.5,105.3 693.6,105.5 690.7,105.7 687.4,103.9 683.9,104.0 682.5,104.5 680.0,104.5 677.5,104.5 675.0,104.5 672.5,104.5 671.3,106.3 670.6,108.7 669.8,111.0 670.1,111.9 670.4,115.0 668.3,116.6 671.4,116.8 674.3,118.7 677.1,119.0 678.2,117.9 680.6,118.7 683.9,120.3 686.9,123.3 687.2,125.1 689.8,129.2 691.5,131.9 691.7,136.0 691.7,139.3 690.8,142.9 689.6,146.2 688.8,148.4 686.6,149.0 683.9,148.2 683.1,149.6 682.5,150.4 681.4,151.9 682.3,154.0 681.7,155.0 680.7,156.8 679.4,157.4 680.0,159.2 682.9,160.7 683.9,161.8 685.2,163.1 687.4,165.2 688.6,167.8 689.6,169.4 689.1,170.5 686.9,171.2 686.3,171.5 683.2,171.4 682.0,169.1 682.2,168.0 680.1,165.7 680.3,163.9 677.9,163.2 677.5,162.4 675.1,162.1 675.4,160.4 674.3,158.2 671.8,156.9 669.1,157.9 666.9,159.9 666.1,160.1 665.7,157.9 665.8,155.0 664.5,154.3 662.8,154.6 662.8,154.8 660.9,157.1 660.3,159.0 657.9,159.6 658.1,160.7 662.4,163.1 662.6,164.1 663.9,164.9 665.1,164.1 666.3,162.9 668.2,163.6 669.8,163.8 671.4,164.1 671.5,165.5 669.5,166.0 667.5,167.8 666.5,169.7 666.6,171.5 669.5,172.8 672.3,176.4 676.0,180.1 676.8,182.3 674.9,183.7 677.7,185.0 678.2,185.1 678.5,187.4 677.2,190.5 676.3,193.0 675.5,196.1 674.5,198.3 674.0,199.3 672.7,200.4 671.3,202.8 670.1,203.5 667.4,205.3 664.5,206.5 663.0,206.9 661.3,207.9 659.0,208.4 655.8,209.6 655.7,212.1 654.4,210.7 653.9,208.7 652.5,208.9 650.5,208.4 649.8,208.7 647.2,210.8 647.0,212.4 645.5,213.6 645.6,216.6 647.8,219.1 648.3,219.9 651.0,222.6 652.8,223.9 654.8,226.4 656.1,230.5 656.8,232.9 656.4,234.7 656.5,235.8 656.1,236.7 654.1,238.5 651.7,240.0 650.8,241.3 649.7,242.7 646.3,244.9 646.2,241.6 646.9,241.0 645.2,239.9 644.5,239.3 642.8,239.3 641.4,237.1 641.2,236.5 639.9,234.8 638.6,234.0 636.8,233.6 635.9,233.6 635.6,231.5 634.9,231.2 633.5,231.7 633.5,233.9 633.4,236.0 632.3,239.6 632.9,243.0 634.8,245.5 636.3,248.9 638.0,249.7 639.5,251.1 640.5,251.7 642.8,254.2 643.7,256.5 643.6,258.4 643.9,261.2 644.8,262.2 645.9,265.2 644.8,265.4 643.8,265.3 642.5,264.0 640.9,262.9 639.8,262.1 638.5,260.7 637.1,257.9 636.6,257.3 635.9,253.9 635.7,252.0 635.0,250.6 633.5,248.3 631.9,246.5 630.5,246.9 630.2,244.4 630.8,241.2 630.3,238.2 630.2,234.1 628.6,229.6 627.4,226.3 626.5,222.8 624.9,221.4 624.4,221.9 623.3,222.8 621.4,224.7 619.4,224.4 618.4,224.2 618.6,220.5 617.7,217.1 615.9,214.6 613.6,212.5 610.9,208.9 610.1,206.5 608.0,205.6 607.1,207.3 604.8,208.2 603.3,208.4 601.4,208.3 598.8,208.7 598.8,210.8 598.5,212.1 596.6,213.5 594.5,215.0 592.8,217.7 591.1,219.4 588.9,221.5 589.0,222.5 586.3,223.7 585.6,224.9 583.9,225.6 584.3,228.4 585.0,232.3 584.1,235.5 584.4,238.9 584.5,240.2 583.1,240.2 582.5,242.1 583.3,243.0 580.6,244.0 580.5,244.4 579.1,246.4 577.4,245.2 576.6,244.1 575.6,241.2 574.3,237.5 573.1,235.8 571.6,233.0 569.4,227.5 568.4,225.6 566.8,221.4 565.0,215.9 564.6,213.5 564.6,211.8 564.1,209.7 563.3,206.7 562.7,208.0 561.3,210.4 560.1,211.0 558.5,210.4 556.4,208.3 554.7,206.6 554.8,206.0 557.1,205.6 557.7,204.6 555.8,205.1 555.5,204.9 553.5,203.7 552.4,202.5 550.6,201.8 549.7,200.3 549.0,199.4 548.0,198.0 545.6,198.2 543.2,198.3 540.4,198.2 537.7,198.6 536.4,198.7 533.5,198.0 529.6,197.8 526.6,197.1 524.4,194.4 522.5,192.8 520.7,194.0 519.4,194.5 515.9,194.1 513.5,192.1 512.1,190.9 508.8,187.8 507.1,185.1 506.7,184.7 505.4,184.6 503.6,185.0 501.7,186.7 503.1,188.8 503.4,189.3 506.6,193.3 508.0,194.8 508.3,197.1 510.0,199.6 509.8,197.5 510.7,195.7 511.8,198.0 512.0,200.0 511.6,200.8 514.5,201.1 518.8,200.4 520.7,198.2 522.2,196.6 522.9,195.1 523.3,197.2 523.3,198.5 524.5,200.7 529.2,202.8 532.4,205.9 531.6,209.0 530.0,211.8 528.2,213.5 528.4,215.7 526.6,217.7 525.0,218.8 522.6,220.2 519.8,221.4 517.4,222.3 515.3,224.2 512.5,226.4 508.1,228.2 505.4,229.8 501.8,231.5 498.1,233.1 494.5,233.6 493.8,231.7 492.8,227.5 492.0,224.2 491.5,221.6 488.7,217.7 487.6,215.5 484.7,212.1 482.5,208.7 481.9,205.1 479.3,201.4 477.1,198.9 475.0,195.4 473.0,192.3 471.1,190.2 470.8,186.2 470.6,186.2 469.8,189.1 469.4,191.2 467.8,189.8 466.4,187.5 464.8,185.0 464.5,186.0 465.4,187.6 466.5,189.5 467.7,191.0 468.5,192.6 468.9,194.0 469.9,195.8 471.5,198.7 473.2,201.7 473.7,202.0 473.3,203.9 475.4,205.6 476.8,207.3 477.3,209.6 478.0,211.8 478.0,214.0 478.7,216.3 480.4,217.7 481.7,218.5 483.1,222.5 484.1,225.3 485.0,226.1 486.1,227.2 487.9,227.8 489.9,230.1 491.7,232.0 492.6,232.6 494.0,234.0 494.0,235.5 492.6,236.7 493.7,236.5 494.6,237.2 496.4,239.3 498.4,239.7 502.1,238.9 504.5,237.9 506.2,237.8 508.7,237.4 511.4,236.8 513.6,235.5 513.5,237.9 514.2,239.7 513.1,242.4 511.7,245.2 510.5,246.8 508.8,250.0 507.6,254.1 506.0,256.7 503.8,259.8 501.4,262.4 499.8,263.3 498.3,264.3 496.5,266.0 494.5,268.3 492.9,270.1 490.4,273.7 488.7,275.6 487.0,276.8 486.7,278.1 485.6,280.5 484.4,282.2 484.2,283.3 483.4,286.0 483.6,287.2 484.6,288.2 485.0,290.7 484.5,292.4 484.9,294.2 485.3,297.2 486.6,298.0 487.5,299.2 487.0,302.8 487.0,305.5 487.1,309.0 487.4,311.4 485.3,314.6 483.1,316.6 480.6,317.7 477.8,319.4 475.9,321.9 473.6,323.9 472.2,324.9 471.7,326.7 472.6,329.5 473.1,330.9 473.4,333.7 473.2,336.2 472.6,337.9 470.6,338.8 468.6,339.6 466.6,340.7 465.8,342.0 466.4,344.5 465.5,346.6 464.8,348.9 464.0,350.0 462.2,351.7 461.3,352.9 459.7,355.5 457.3,358.0 454.6,360.4 453.1,361.8 450.6,363.5 447.5,364.5 445.6,365.2 442.2,364.9 439.3,365.2 436.5,365.7 434.1,366.9 432.3,365.9 430.7,365.6 430.5,364.3 429.5,361.8 430.6,359.3 429.8,357.0 428.5,354.2 427.5,351.3 426.6,349.4 424.9,347.2 423.7,344.0 423.3,339.3 422.4,336.2 422.5,332.9 421.2,330.3 419.5,325.8 417.8,321.9 416.1,317.6 416.2,314.6 417.1,311.8 418.1,307.3 420.3,304.5 421.3,301.1 421.4,299.2 420.2,296.3 419.4,294.7 419.9,293.8 420.4,292.1 419.7,291.1 419.1,289.5 417.9,286.2 417.5,284.7 416.7,282.6 414.8,280.1 413.7,278.6 411.1,275.8 410.1,273.3 409.0,270.9 410.4,269.4 410.6,268.0 411.1,266.3 411.5,263.9 411.6,262.4 411.8,260.8 411.3,257.9 410.1,257.9 409.4,256.3 407.9,256.3 405.9,256.6 405.0,256.7 402.4,257.0 400.7,254.5 399.7,252.5 398.2,251.4 395.7,251.1 393.2,251.3 390.3,252.0 389.8,252.8 386.8,253.5 384.2,254.8 382.1,255.8 379.9,254.8 377.4,254.4 374.9,254.6 372.2,255.2 370.8,255.8 368.2,256.9 366.2,255.3 364.9,255.1 362.4,252.5 360.6,251.4 359.1,250.1 356.4,248.3 355.4,246.9 354.5,245.2 354.4,243.8 353.5,242.4 352.0,240.5 350.8,238.8 349.8,237.9 348.1,236.0 346.6,234.6 345.9,232.6 346.4,231.3 346.0,229.8 344.3,227.7 345.3,226.4 346.8,224.2 347.4,221.4 348.2,218.3 347.0,214.6 347.6,212.1 345.8,210.7 346.1,208.7 347.8,204.5 348.7,202.5 351.1,199.4 352.4,195.8 355.1,192.8 356.4,190.6 359.8,189.1 363.0,186.5 364.3,183.7 363.8,183.0 364.1,180.6 365.4,178.4 367.3,175.7 369.4,174.7 371.2,173.5 372.9,170.2 373.5,168.6 374.9,168.3 378.2,170.2 380.5,170.0 382.6,170.5 385.9,168.7 390.3,166.6 394.5,165.7Z M466.7,268.5 465.9,271.6 465.9,274.2 466.7,276.1 468.6,276.4 470.1,275.0 471.6,272.5 471.9,268.8 469.9,268.1Z M499.4,137.7 495.8,139.1 493.4,140.2 492.9,141.0 492.4,141.8 491.6,142.1 491.9,144.3 493.8,144.8 493.4,146.2 494.2,148.4 496.5,151.1 499.1,153.5 500.6,155.1 502.3,155.8 501.2,155.8 500.4,158.8 499.7,160.3 500.0,161.3 501.8,163.9 504.7,165.5 506.5,166.3 509.5,166.0 512.6,165.5 511.8,163.8 511.2,159.9 509.3,158.5 508.3,156.8 507.9,154.3 510.3,154.6 511.4,152.6 509.3,150.4 507.0,151.2 505.6,149.3 502.6,148.2 501.9,146.6 501.0,145.1 499.4,144.0 501.6,142.1 504.9,142.1 504.4,139.3 503.8,137.7 501.4,137.7Z M584.5,246.1 584.7,241.7 585.7,242.4 588.1,245.2 590.0,248.6 589.5,251.0 586.9,252.4 585.4,251.7 584.8,248.9Z M464.3,170.2 466.5,169.7 467.9,169.0 466.7,170.8 464.6,171.9 462.9,171.1Z M443.8,169.7 445.9,169.8 448.8,170.1 448.1,170.8 445.3,170.9 442.5,170.2 442.3,170.0Z M416.6,163.6 416.1,162.9 418.0,161.8 420.8,162.2 423.3,161.5 422.7,163.8 422.4,166.2 420.7,165.6 418.6,164.3Z M408.2,153.3 409.5,155.4 409.3,158.8 408.0,159.4 406.6,159.7 406.6,157.1 406.0,154.3Z M408.3,152.9 407.3,152.5 406.7,150.1 408.4,148.4 408.9,150.9Z M269.2,124.9 268.0,126.5 265.4,128.7 266.5,129.3 267.5,129.3 268.0,130.6 270.6,130.7 271.5,131.4 270.4,132.7 272.1,133.0 270.3,134.7 272.1,134.7 272.0,136.0 270.4,138.4 269.3,138.4 269.1,136.6 268.1,137.8 266.4,137.7 265.3,137.7 265.9,136.3 264.3,135.8 261.9,135.8 259.3,135.6 257.8,135.8 259.7,133.6 258.8,133.2 261.1,131.4 262.3,130.2 264.7,127.3 266.4,125.4Z M368.4,120.7 366.6,119.5 366.5,117.8 369.6,117.6 369.4,116.8 370.1,115.4 372.2,114.8 374.9,115.2 375.8,116.7 375.6,117.6 374.5,118.7 374.3,120.3 374.5,123.3 373.7,123.3 371.4,123.8 369.2,124.7 366.4,125.3 365.8,124.5 365.2,123.5 367.3,121.8Z M378.2,124.7 376.4,124.7 376.0,124.1 377.3,123.5 378.7,122.5 378.7,121.4 377.3,121.6 378.1,120.8 377.6,120.0 378.9,120.3 380.8,120.4 381.1,120.0 380.9,119.1 381.4,118.0 380.6,118.2 380.2,117.1 381.0,115.9 379.8,116.0 378.4,116.3 377.2,116.7 376.7,116.0 377.7,114.6 377.3,113.4 376.8,114.5 375.5,115.0 375.9,113.1 375.7,111.9 374.6,111.3 375.6,111.0 375.8,110.0 375.6,108.9 376.6,108.3 376.8,107.2 377.3,106.3 378.5,106.5 380.5,106.3 381.2,106.2 381.1,106.8 379.4,108.3 379.2,108.9 380.6,108.7 383.0,108.7 383.7,109.2 383.0,110.2 382.2,111.5 381.6,112.3 380.5,113.1 382.0,113.0 383.2,113.7 384.0,114.5 384.4,115.8 384.8,116.7 386.5,117.6 387.1,118.2 387.6,119.5 386.7,119.2 387.5,119.5 388.0,120.8 387.5,121.4 388.4,121.2 390.0,121.2 390.8,121.8 391.0,122.5 390.1,123.9 389.3,124.3 388.6,125.1 389.2,125.5 390.3,125.4 390.3,126.1 389.3,126.8 387.8,127.2 385.7,127.2 384.5,127.2 383.1,127.6 382.0,127.7 380.0,127.6 379.8,128.4 378.4,128.3 376.4,129.2 375.0,129.1 376.5,128.1 377.6,127.0 378.3,126.0 380.9,126.0 381.6,125.0 380.6,125.4 379.2,125.0Z M409.6,115.0 409.0,115.6 407.8,115.5 407.5,114.7 408.7,114.2Z M413.1,113.0 413.3,114.2 412.4,115.8 410.5,115.2 410.2,114.1 411.3,113.3Z M425.5,109.7 424.6,110.6 424.1,109.8 424.7,108.3 425.7,108.1Z M349.5,87.5 351.4,87.4 353.4,87.4 355.3,86.9 357.2,86.4 360.1,87.6 361.7,89.8 359.0,91.8 355.2,93.1 353.3,93.6 351.3,94.1 348.5,93.7 346.9,92.9 344.0,92.9 345.5,91.8 342.2,90.6 345.6,89.1 343.6,88.9 341.6,88.7 344.6,86.7 347.4,88.9Z M474.4,80.4 475.2,79.2 477.8,79.9 476.9,81.1Z M289.1,89.6 287.8,87.4 288.2,85.2 289.9,82.8 292.4,82.1 294.9,81.3 295.3,79.7 292.0,79.7 289.1,79.0 290.5,77.3 292.3,77.3 294.0,77.3 296.5,75.9 294.9,75.6 293.3,75.2 290.7,74.1 291.2,71.6 290.7,68.9 289.9,66.3 288.8,65.4 287.8,64.5 285.4,64.3 283.1,64.1 280.5,64.3 277.9,64.5 275.9,64.4 273.9,64.3 273.1,63.3 272.3,62.4 271.6,61.3 271.0,60.3 273.9,59.7 276.8,59.1 279.4,58.6 281.9,58.1 284.4,57.7 287.3,56.1 290.6,55.3 293.9,54.4 297.1,53.6 299.9,53.2 302.8,52.7 305.6,52.3 308.2,52.3 310.9,52.2 313.6,52.1 316.2,52.0 318.8,51.7 321.3,51.4 323.9,51.1 326.4,50.8 328.9,50.5 331.6,50.4 334.2,50.3 336.8,50.2 339.4,50.1 341.5,50.2 343.6,50.3 345.8,50.4 347.9,50.5 350.1,51.1 352.4,51.6 354.7,52.2 352.6,52.5 350.5,52.7 348.4,53.0 350.8,53.1 353.2,53.2 355.5,53.2 357.9,53.3 360.3,53.4 363.0,53.4 365.8,53.5 368.5,53.6 366.5,54.3 364.4,55.0 362.0,55.7 359.6,56.3 358.3,58.3 356.5,59.3 354.6,60.3 356.5,62.4 354.7,63.1 352.9,63.9 354.9,66.0 352.8,68.0 350.8,69.1 348.9,70.2 348.7,72.7 346.8,72.5 344.9,72.3 346.9,73.3 348.8,74.3 348.4,76.6 346.2,76.3 344.1,75.9 342.2,76.6 340.2,77.3 342.8,77.9 345.3,78.5 343.3,79.4 341.3,80.4 338.9,81.1 336.4,81.8 333.2,82.2 329.9,82.5 327.7,83.9 325.5,85.2 323.4,86.2 321.2,87.1 319.3,87.5 317.3,87.9 314.9,88.5 312.6,89.1 310.6,91.3 308.8,93.8 305.5,96.3 303.5,99.6 301.9,101.9 300.2,103.2 298.0,101.9 295.8,100.8 292.5,100.1 291.4,97.9 290.3,95.6 289.6,93.6 288.8,92.1Z M494.2,62.4 496.8,62.6 499.4,62.8 498.7,63.9 496.8,64.3 495.0,64.7 493.1,65.2 490.7,65.9 488.4,66.7 487.0,67.8 485.6,68.9 484.3,69.7 483.1,70.5 484.0,72.7 487.3,75.0 489.1,76.6 487.3,76.6 485.5,76.6 483.6,76.3 481.7,75.9 479.5,75.1 477.4,74.3 477.1,72.7 478.8,70.5 478.8,68.9 480.0,66.7 482.0,65.9 484.0,65.2 486.4,64.5 488.8,63.9 490.6,63.4 492.4,62.9Z M421.4,61.3 423.0,59.9 424.8,60.3 426.5,60.7 425.2,61.7 423.3,61.5Z M421.1,58.7 419.3,59.1 417.4,59.5 419.5,60.0 421.6,60.5 419.4,61.0 417.1,61.5 415.0,63.2 413.3,62.8 411.6,62.4 409.4,60.7 407.7,60.1 406.0,59.5 404.3,58.5 405.1,56.9 407.8,56.8 410.5,56.7 412.7,56.3 415.4,56.0 418.0,55.7 420.0,55.7 422.1,55.7 424.1,55.7 426.5,55.9 428.9,56.1 427.2,56.8 425.4,57.5 423.3,58.1Z M528.0,54.8 530.2,54.5 532.3,54.1 534.8,54.5 537.4,54.8 539.9,55.2 538.6,55.9 537.3,56.7 535.0,57.0 532.6,57.3 530.1,56.8 527.6,56.3Z M456.1,55.4 457.4,55.0 458.7,54.6 461.1,54.5 463.5,54.3 465.9,54.1 467.9,53.8 470.0,53.6 472.0,53.3 474.1,53.0 476.9,53.5 479.9,54.0 482.8,54.5 480.9,54.9 479.0,55.4 476.6,55.6 474.2,55.7 471.8,55.9 469.3,56.1 466.9,56.2 464.4,56.3 461.6,56.0 458.8,55.7Z M683.6,298.0 681.7,296.6 681.3,295.6 683.8,295.4 685.6,297.2Z M694.5,297.7 692.2,298.2 693.9,295.5 696.6,293.4 700.1,292.6 702.1,292.8 700.2,294.4 696.1,296.1Z M678.1,292.7 679.8,292.4 681.5,292.8 681.5,293.8 679.0,294.1 676.5,294.5 676.1,292.7Z M686.5,292.7 689.7,293.0 691.4,292.1 690.9,293.4 687.6,294.1 684.4,294.0 683.8,292.7Z M670.5,292.1 672.2,291.7 673.4,292.7 675.9,292.6 675.8,294.1 673.8,294.0 671.8,293.8Z M666.0,288.5 666.4,290.2 668.8,290.7 670.4,291.0 670.1,293.4 666.7,292.4 663.0,292.4 659.4,291.3 656.2,290.7 653.2,290.7 650.6,289.7 648.4,288.3 647.7,288.2 649.8,285.7 652.0,286.1 654.7,286.8 656.1,288.1 659.6,288.5 661.9,287.1 663.3,287.9Z M699.7,278.1 702.2,277.8 702.6,279.5 700.1,279.8Z M707.2,277.1 710.9,277.8 711.5,279.8 708.4,278.6 705.1,278.9 704.4,278.1Z M688.7,267.8 685.8,268.0 685.0,270.5 686.7,272.8 688.7,271.5 692.2,271.6 693.4,271.8 690.7,273.6 688.7,274.4 690.5,277.5 691.2,280.6 692.3,282.3 691.7,284.3 689.6,282.3 688.4,282.3 687.0,278.9 685.8,277.2 685.7,281.7 685.5,284.8 683.3,284.5 683.5,280.3 681.9,277.0 683.2,273.0 684.3,269.4 684.5,266.9 687.0,265.4 689.9,266.2 693.2,266.4 696.1,265.2 697.9,264.7 696.2,267.7 693.2,268.1Z M705.8,271.3 704.4,269.4 703.6,266.3 704.8,263.2 704.8,266.3 706.5,264.9 705.8,267.4 707.1,268.5 704.9,268.0Z M673.6,253.4 675.0,251.4 676.1,249.4 677.4,249.7 678.7,251.4 679.5,252.8 682.6,254.2 680.2,256.5 678.8,257.3 679.3,259.3 679.2,261.8 680.0,262.9 682.5,266.3 680.0,266.9 678.8,268.8 679.0,271.3 676.3,273.3 676.2,276.1 674.9,279.2 671.6,280.6 671.2,278.9 668.9,278.6 665.0,278.6 664.3,277.2 660.6,277.2 660.4,273.9 658.0,270.5 658.2,268.0 657.5,266.9 657.7,264.9 659.4,263.5 660.9,264.3 663.1,264.9 663.6,262.1 667.5,260.1 669.8,256.2 672.2,255.1Z M698.5,251.1 697.9,253.4 696.9,252.5 694.8,251.1 694.1,248.3 692.4,248.0 691.1,248.0 689.5,249.7 689.0,249.4 689.8,246.6 692.4,244.7 694.6,245.2 697.1,241.9 699.2,243.0 700.3,247.5 699.8,251.4Z M677.1,245.5 678.9,243.3 681.1,240.2 682.3,237.4 681.8,239.6 680.4,242.7 678.3,244.9Z M692.0,243.0 691.3,243.8 689.6,241.3 690.6,238.5 692.1,238.8Z M693.6,239.3 692.2,242.4 693.2,237.6Z M688.5,239.7 687.8,235.7 690.9,236.5 690.6,238.5Z M696.0,234.0 697.4,237.6 696.4,240.2 695.5,240.5 695.7,238.2 694.1,236.8 693.5,234.0Z M686.0,234.8 684.9,233.7 683.6,231.5 685.6,231.5 686.6,233.7Z M688.0,229.2 690.6,229.8 692.9,232.6 693.0,233.9 691.2,232.6 689.1,232.0 687.9,230.1 686.4,230.1 684.2,230.2 683.8,228.7 684.5,228.0 682.4,227.5 681.1,224.2 682.2,222.5 681.9,219.9 681.9,217.1 683.1,216.7 685.4,217.1 686.6,220.2 687.6,223.3 685.6,224.4 686.3,227.2Z M653.7,213.2 656.3,212.8 658.0,214.0 657.1,216.3 655.2,218.0 652.9,217.1 652.5,214.9Z M679.4,198.9 680.7,198.2 681.8,200.0 681.5,203.9 680.8,207.4 678.7,204.8 678.1,202.8 678.8,200.6Z M696.1,181.2 695.1,178.7 693.4,177.3 692.9,176.1 693.8,174.7 694.9,173.9 697.3,175.3 698.5,177.0 698.6,180.3 697.6,182.0Z M551.1,58.3 554.6,59.7 552.6,60.0 550.7,60.3 548.3,60.3 545.9,60.3 543.2,59.5 540.6,58.7 542.0,58.2 543.3,57.7 545.9,57.9 548.5,58.1Z M544.0,57.7 543.8,56.3 546.0,56.5 548.2,56.7 549.0,57.9 546.5,57.8Z M769.8,393.4 768.2,395.0 765.0,397.5 761.4,399.4 758.3,399.7 757.1,398.6 755.3,398.0 757.7,395.8 762.6,393.1 765.1,392.2 769.1,390.6 772.7,388.9 775.7,386.4 779.0,383.9 781.2,382.8 780.6,384.7 783.1,384.2 782.3,386.1 779.0,388.4 776.1,390.3 774.5,391.7Z M714.9,388.6 716.0,385.6 717.0,383.4 719.2,384.5 722.3,383.9 724.8,383.9 722.6,387.3 719.7,390.3 716.7,391.4 714.8,391.1Z M800.0,375.0 797.8,377.5 795.9,378.9 793.6,379.2 792.4,380.8 789.6,383.1 785.8,385.4 784.6,385.9 784.1,385.0 787.3,382.2 787.2,380.8 785.9,379.7 788.9,378.1 790.9,375.8 792.1,373.3 792.2,371.6 792.3,369.9 791.8,368.0 792.1,365.9 792.9,367.4 794.5,368.2 793.9,371.1 795.0,371.9 794.5,374.1 796.1,375.5 799.0,374.7Z M743.9,314.0 744.4,316.6 744.7,319.1 744.6,321.9 746.0,323.3 747.4,324.7 749.1,325.6 749.7,327.5 750.2,329.5 750.6,332.0 753.1,332.6 752.7,335.1 754.3,336.5 756.2,340.2 756.3,342.1 755.1,344.9 755.0,348.0 754.7,349.6 752.7,352.8 750.7,355.9 747.8,359.5 745.3,361.5 743.0,363.8 741.0,366.0 737.3,369.9 735.2,373.0 734.2,374.4 730.4,375.4 727.7,376.1 723.6,378.9 722.3,377.5 721.2,376.9 721.4,375.8 719.0,377.2 717.3,378.2 715.7,376.9 713.6,376.9 711.8,376.0 711.2,373.6 712.3,371.1 711.7,369.4 710.4,369.1 711.6,366.6 711.6,364.0 709.5,367.7 707.1,368.2 709.7,365.2 712.2,362.1 712.6,360.7 710.1,363.8 707.5,364.9 705.3,367.1 704.2,366.0 704.6,362.4 703.8,360.9 702.2,359.5 700.1,359.0 698.2,357.6 695.5,357.9 692.8,358.1 688.3,359.5 685.1,359.8 680.3,361.8 677.7,364.3 673.9,364.3 671.5,364.4 669.1,364.5 666.3,365.7 663.2,367.7 660.2,367.5 657.3,365.6 657.8,363.5 659.7,362.6 661.1,359.0 661.5,356.2 661.5,353.4 661.8,350.6 661.1,347.2 660.1,342.7 661.6,342.1 661.4,337.9 663.2,333.7 663.5,331.7 664.6,330.3 665.7,330.3 668.1,329.2 671.4,327.0 673.3,327.2 676.2,326.1 678.8,325.3 682.4,324.2 684.9,321.1 686.1,319.4 686.8,316.8 688.5,315.4 689.9,317.7 690.4,314.6 692.3,314.9 694.0,312.1 696.5,309.8 699.2,307.9 701.1,309.0 702.3,310.7 702.7,311.2 704.2,311.0 706.0,310.7 705.9,307.9 707.9,305.6 709.6,303.9 711.4,303.4 714.1,303.1 714.4,301.1 716.5,302.2 720.0,303.4 722.5,303.1 724.7,303.6 723.6,306.2 721.8,306.7 720.2,311.0 722.5,313.5 725.1,315.2 727.8,316.6 728.9,318.3 731.3,318.5 732.8,315.7 734.8,311.8 735.7,307.9 736.4,304.5 737.5,301.4 739.0,299.2 739.5,301.4 740.1,304.2 740.3,307.9 740.8,309.5 742.6,309.0 744.2,311.1Z M792.0,330.3 792.6,331.7 790.7,331.7 788.1,328.6 786.9,325.6 789.6,327.5Z M821.0,319.1 823.0,318.0 824.3,319.4 822.4,320.4Z M825.7,316.7 825.1,316.3 828.2,314.6 828.5,315.4Z M796.5,311.2 797.7,312.6 797.9,315.2 797.4,314.0Z M784.7,292.4 785.9,294.9 786.2,296.6 785.2,294.4Z M782.2,295.2 782.0,292.4 784.0,294.4 784.5,296.6Z M770.5,284.3 772.4,286.0 773.2,288.2 771.5,287.6Z M729.6,273.6 733.3,275.3 737.0,276.4 740.6,278.1 744.3,279.8 746.7,281.5 748.5,284.3 751.4,285.7 753.2,287.4 751.6,289.3 753.4,291.6 754.6,294.4 757.4,296.3 759.7,297.9 758.0,299.2 755.0,297.9 751.6,297.2 750.3,295.2 748.3,292.4 745.5,290.7 743.0,291.6 741.5,294.4 739.0,294.9 735.8,294.7 733.3,291.9 730.8,292.4 728.7,290.4 730.6,288.2 729.6,284.8 726.8,282.9 723.1,281.7 719.5,280.1 717.0,280.3 716.5,278.4 714.6,277.2 717.6,275.8 718.9,275.3 715.4,275.3 713.5,273.3 712.3,271.3 715.3,270.2 718.5,271.2 720.2,271.5 720.1,274.7 721.8,278.4 724.3,277.0 727.1,274.7Z M760.0,286.5 757.0,286.5 754.9,284.5 757.6,284.5 760.8,284.5 762.7,282.9 764.5,280.9 764.9,283.1 762.6,284.8Z M766.0,280.3 766.7,282.0 765.5,281.2 762.9,278.4 761.3,276.4 763.7,278.1Z M698.2,175.3 698.7,173.6 700.7,172.8 703.1,173.0 703.9,174.2 703.3,175.6 701.2,175.6 700.9,177.1Z M704.2,168.8 704.0,167.4 704.6,165.5 704.0,164.1 705.0,163.8 705.4,165.5 707.8,164.6 708.2,162.4 708.6,160.4 708.0,158.2 706.6,155.4 706.1,153.5 707.2,152.6 708.4,153.2 710.0,155.4 712.4,157.6 712.8,159.9 712.4,161.5 713.9,164.3 714.4,166.9 715.7,168.7 715.2,170.2 714.4,170.9 713.5,169.1 712.5,170.1 712.4,171.8 711.0,171.8 708.9,171.8 707.8,171.4 708.2,172.8 707.7,174.4 706.8,175.0 704.7,173.9 704.3,171.9 702.2,171.5 700.2,172.3 697.8,172.8 696.6,173.6 694.7,173.6 694.4,172.3 696.1,170.9 697.3,169.4 698.9,169.4 701.0,169.0 703.0,169.1Z M711.7,144.8 713.6,147.6 711.4,148.6 711.5,151.2 707.7,149.8 705.8,150.4 706.9,151.8 706.0,152.6 705.0,152.8 704.2,150.4 702.8,147.9 704.9,147.6 703.3,144.3 702.0,141.5 706.0,144.0 710.0,145.5Z M689.8,121.9 693.0,125.7 696.5,129.2 700.4,131.7 697.2,131.1 699.2,134.7 701.4,137.4 703.3,138.5 704.0,139.9 701.5,138.5 701.1,140.2 698.4,136.0 695.2,131.9 692.4,127.9 688.9,124.6 685.4,120.3 684.2,117.6 685.8,118.2Z M701.7,75.5 700.7,74.6 702.4,74.6 704.8,75.9Z M631.4,69.6 631.1,70.5 628.8,70.4 626.5,70.2 624.8,69.1 627.0,68.9 629.2,69.2Z M631.6,66.5 631.8,65.6 634.5,65.7 637.2,65.8 639.4,67.1 636.8,66.9 634.2,66.7Z M620.6,64.3 624.1,64.9 627.7,65.6 627.0,66.7 624.4,66.9 621.8,67.1 618.5,66.6 615.1,66.0 615.2,64.5 617.9,64.4Z" fill="#70758c" stroke="#fff" stroke-width=".5" fill-rule="evenodd"/>
<path d="M416.1,176.7 418.4,176.7 421.1,177.5 423.2,178.1 424.0,180.3 426.7,181.5 429.6,182.3 432.7,184.0 434.8,182.6 434.7,180.6 434.8,178.9 436.4,177.3 438.9,176.7 440.6,177.0 442.1,178.4 444.1,179.1 446.9,180.3 446.9,183.7 447.0,187.1 447.3,192.1 447.6,197.2 447.8,202.3 448.0,207.3 448.1,210.1 448.2,212.9 445.8,212.9 445.8,214.3 441.9,212.1 437.9,209.9 433.9,207.7 430.0,205.5 426.1,203.2 423.7,204.5 421.7,205.6 419.1,204.4 416.4,203.1 412.2,200.3 409.9,195.5 411.1,194.4 410.8,189.6 410.9,185.4 409.9,184.1 411.5,182.3 411.7,180.1 414.5,178.1 414.5,176.0 414.5,175.7Z M477.3,209.6 478.0,211.8 478.0,214.0 478.7,216.3 480.4,217.7 481.7,218.5 477.9,221.4 476.7,226.7 477.0,228.9 476.9,230.9 476.2,233.4 473.8,236.0 473.4,238.5 472.0,239.3 471.6,242.6 471.0,240.5 469.2,238.8 468.9,234.8 467.2,236.2 466.0,239.6 463.9,241.6 461.4,240.2 460.2,241.6 458.9,242.1 456.5,242.7 452.8,242.4 449.0,240.2 446.6,241.9 445.3,241.0 443.8,238.2 441.0,233.4 441.9,230.1 442.6,229.2 442.3,227.0 443.7,225.0 446.2,225.0 446.0,219.7 445.8,214.3 445.8,212.9 448.2,212.9 448.1,210.1 448.0,207.3 452.8,207.3 457.6,207.3 462.4,207.3 467.2,207.3 472.0,207.3 476.8,207.3Z M449.0,240.2 452.8,242.4 456.5,242.7 458.9,242.1 460.2,241.6 461.4,240.2 463.9,241.6 466.0,239.6 467.2,236.2 468.9,234.8 469.2,238.8 471.0,240.5 471.6,242.6 471.6,244.9 469.6,245.5 468.9,246.9 470.9,247.8 473.2,250.3 474.7,253.9 471.6,257.3 469.1,258.1 467.1,259.0 464.6,258.4 463.8,259.3 460.9,256.2 457.7,257.0 455.2,254.8 452.7,250.8 449.9,247.8 448.4,245.5 446.6,241.9Z M428.6,247.8 431.8,246.6 434.3,243.8 437.7,243.5 440.9,239.3 443.8,238.2 445.3,241.0 446.6,241.9 448.4,245.5 449.9,247.8 452.7,250.8 455.2,254.8 451.7,254.8 448.0,255.1 444.3,255.9 443.1,257.3 439.3,257.0 435.6,255.1 433.4,257.0 433.4,259.3 430.7,259.0 428.5,259.3 427.5,262.9 424.5,257.9 423.2,255.1 423.5,251.7 425.7,248.0Z M483.1,222.5 484.1,225.3 485.0,226.1 486.1,227.2 487.9,227.8 489.9,230.1 491.7,232.0 492.6,232.6 493.4,233.4 491.8,234.0 489.9,231.2 487.9,229.5 486.4,228.7 483.1,228.1 480.4,227.2 479.7,228.7 477.0,228.9 476.7,226.7 477.9,221.4 481.7,218.5Z M494.6,237.2 496.4,239.3 498.4,239.7 502.1,238.9 504.5,237.9 506.2,237.8 508.7,237.4 511.4,236.8 513.6,235.5 513.5,237.9 514.2,239.7 513.1,242.4 511.7,245.2 510.5,246.8 508.8,250.0 507.6,254.1 506.0,256.7 503.8,259.8 501.4,262.4 499.8,263.3 498.3,264.3 496.5,266.0 494.5,268.3 492.9,270.1 490.4,273.7 489.0,271.5 489.0,266.4 488.9,261.2 491.2,258.0 491.4,257.3 495.1,255.6 498.8,255.1 502.4,250.8 506.0,246.6 503.6,246.6 499.8,245.2 496.1,243.8 495.0,242.7 493.0,240.2 493.2,238.3 494.0,236.9 494.1,236.8Z M487.5,299.2 487.0,302.8 487.0,305.5 487.1,309.0 487.4,311.4 485.3,314.6 483.1,316.6 480.6,317.7 477.8,319.4 475.9,321.9 473.6,323.9 472.2,324.9 471.7,326.7 472.6,329.5 473.1,330.9 473.4,333.7 473.2,336.2 472.6,337.9 470.6,338.8 468.6,339.6 466.6,340.7 465.8,342.0 466.4,344.5 464.5,344.5 464.4,342.0 464.4,337.4 463.3,332.0 466.1,328.9 466.4,326.7 467.7,324.7 467.1,322.2 468.0,319.7 467.9,316.0 463.3,314.0 461.9,312.9 461.5,310.7 465.2,309.5 469.0,308.4 470.1,309.8 471.9,309.5 472.3,312.1 471.5,313.5 471.6,314.9 473.7,317.1 475.1,314.0 475.5,311.0 473.2,307.0 472.6,301.7 475.6,301.4 479.8,302.0 482.3,301.1 487.0,298.6Z M515.3,224.2 512.5,226.4 508.1,228.2 505.4,229.8 501.8,231.5 498.1,233.1 494.5,233.6 493.8,231.7 492.8,227.5 492.0,224.2 491.8,223.0 492.2,223.0 493.1,222.2 493.5,219.9 497.9,220.2 501.9,220.8 503.6,221.1 505.1,218.0 507.2,216.9 510.7,216.3 514.2,215.7 515.8,219.0 517.4,222.3Z M471.3,171.1 470.7,169.4 470.9,168.1 471.1,168.1 472.0,167.4 472.3,165.7 473.5,166.2 475.5,165.7 477.9,166.0 481.7,164.9 485.5,164.9 483.1,166.9 483.7,169.1 483.4,172.5 481.0,173.9 478.6,175.4 476.5,176.9 474.3,178.4 471.7,177.1 471.7,175.3 473.2,173.0 472.6,172.1 471.4,171.8 471.3,171.8Z M681.4,151.9 682.3,154.0 681.7,155.0 680.7,156.8 679.4,157.4 680.0,159.2 682.9,160.7 682.8,160.7 680.1,161.5 678.8,163.1 677.9,163.2 677.5,162.4 675.1,162.1 675.4,160.4 674.3,158.2 671.8,156.9 673.9,154.0 674.7,151.8 677.1,151.2 679.0,150.9 679.9,148.6 682.0,150.0 682.5,150.4Z M772.4,286.0 773.2,288.2 771.5,287.6 770.5,284.3Z M740.6,278.1 744.3,279.8 746.7,281.5 748.5,284.3 751.4,285.7 753.2,287.4 751.6,289.3 753.4,291.6 754.6,294.4 757.4,296.3 759.7,297.9 758.0,299.2 755.0,297.9 751.6,297.2 750.3,295.2 748.3,292.4 745.5,290.7 743.0,291.6 741.5,294.4 739.0,294.9 735.8,294.7 736.2,290.1 736.5,285.5 736.8,281.0 737.0,276.4Z M757.0,286.5 754.9,284.5 757.6,284.5 760.8,284.5 762.7,282.9 764.5,280.9 764.9,283.1 762.6,284.8 760.0,286.5Z M766.7,282.0 765.5,281.2 762.9,278.4 761.3,276.4 763.7,278.1 766.0,280.3Z M248.6,252.7 250.7,252.5 253.6,252.8 253.6,252.9 252.5,255.9 252.9,260.1 251.9,262.6 248.7,262.1 247.2,263.8 245.2,259.8 243.5,257.9 245.4,254.2 245.9,252.4 245.9,252.3Z M256.0,253.8 257.7,255.3 259.4,256.7 259.8,257.2 259.2,257.7 256.9,262.1 255.9,262.9 251.9,262.6 252.9,260.1 252.5,255.9 253.6,252.9 253.6,252.8Z M346.1,208.7 346.4,208.0 350.9,207.9 354.0,206.7 354.8,203.7 357.1,201.7 357.6,198.9 357.9,195.1 360.8,194.8 363.7,194.5 365.2,192.6 366.5,191.4 366.4,196.1 362.4,196.1 358.4,196.1 358.3,199.7 358.2,203.2 355.8,204.5 355.4,209.2 350.7,209.2 346.0,209.2Z M349.8,237.9 348.1,236.0 346.6,234.6 346.6,234.3 350.4,233.4 353.6,233.6 353.5,236.2 351.0,236.8 350.3,238.3Z M356.4,248.3 355.4,246.9 354.5,245.2 354.4,243.8 354.4,243.7 356.4,241.4 359.6,241.0 361.1,243.5 361.8,245.2 358.8,249.6 358.5,249.8Z M792.6,331.7 790.7,331.7 788.1,328.6 786.9,325.6 789.6,327.5 792.0,330.3Z M797.7,312.6 797.9,315.2 797.4,314.0 796.5,311.2Z M785.9,294.9 786.2,296.6 785.2,294.4 784.7,292.4Z M782.0,292.4 784.0,294.4 784.5,296.6 782.2,295.2Z M772.4,286.0 773.2,288.2 771.5,287.6 770.5,284.3Z M411.5,263.9 411.6,262.5 415.4,262.9 415.5,266.3 411.6,266.3 411.1,266.3Z" fill="#c0c0c0"/>
<path d="M382.2,170.5 383.2,172.2 383.3,175.6 384.5,178.4 381.4,179.2 378.8,182.0 378.5,182.9 375.4,184.8 373.7,186.0 370.4,186.0 366.6,188.5 366.5,191.4 M366.5,191.4 366.5,192.4 M366.5,191.4 362.9,191.4 359.4,191.4 355.8,191.4 M366.5,192.4 366.4,196.1 362.4,196.1 358.4,196.1 358.3,199.7 358.2,203.2 355.8,204.5 355.4,209.2 350.7,209.2 346.0,209.2 M366.5,192.4 371.0,195.7 375.6,198.9 M375.6,198.9 380.4,202.5 385.3,206.2 390.1,209.8 390.2,210.7 392.7,212.1 395.1,213.5 395.4,215.7 397.7,215.3 M397.7,215.3 401.4,214.5 405.6,210.5 409.2,208.1 412.8,205.6 416.4,203.1 M416.4,203.1 412.2,200.3 409.9,195.5 411.1,194.4 410.8,189.6 410.9,185.4 409.9,184.1 M409.9,184.1 408.7,178.9 406.9,177.8 404.9,174.2 406.5,171.6 406.7,168.8 407.3,165.5 M409.9,184.1 411.5,182.3 411.7,180.1 414.5,178.1 414.5,176.0 M446.9,180.2 446.9,183.6 447.0,187.1 447.3,192.1 447.6,197.2 447.8,202.3 448.0,207.3 M448.0,207.3 448.1,210.1 448.2,212.9 445.8,212.9 445.8,214.3 M445.8,214.3 441.9,212.1 437.9,209.9 433.9,207.7 430.0,205.5 426.1,203.2 423.7,204.5 M423.7,204.5 421.7,205.6 419.1,204.4 416.4,203.1 M448.0,207.3 452.8,207.3 457.6,207.3 462.5,207.3 467.3,207.3 472.1,207.3 476.9,207.3 M375.6,198.9 371.4,198.9 371.8,203.7 372.3,208.4 372.8,213.2 373.3,218.0 373.8,222.8 374.3,225.6 371.0,225.6 367.7,225.6 364.5,225.6 361.0,225.8 359.1,225.3 357.8,227.5 357.3,227.7 M357.3,227.7 355.4,225.6 353.0,222.8 350.5,222.3 347.3,222.8 346.8,224.0 M357.3,227.7 357.8,230.3 359.2,234.3 M346.2,230.9 349.2,230.2 353.3,231.2 349.6,231.7 346.1,232.3 M346.4,234.3 350.4,233.4 353.6,233.6 M353.6,233.6 357.0,234.6 359.2,234.3 M353.6,233.6 353.5,236.2 351.0,236.8 350.3,238.3 M359.2,234.3 360.9,235.7 365.1,234.3 366.8,238.2 367.5,240.5 M354.4,243.7 356.4,241.4 359.6,241.0 361.1,243.5 361.8,245.2 M361.8,245.2 363.8,245.5 364.3,248.3 366.3,247.8 M361.8,245.2 358.8,249.6 M367.5,240.5 367.5,245.2 366.3,247.8 M366.3,247.8 366.5,250.8 368.7,252.8 368.6,256.7 M367.5,240.5 372.0,239.6 373.7,239.9 M373.7,239.9 374.2,236.0 376.5,233.4 379.9,230.6 382.4,229.2 385.6,226.8 387.8,227.1 M387.8,227.1 390.5,226.1 393.2,226.0 395.9,225.8 396.9,225.0 397.6,223.0 397.6,219.2 397.7,215.3 M373.7,239.9 376.2,241.9 380.6,242.4 M380.6,242.4 380.6,246.9 379.4,250.3 379.6,254.8 M380.6,242.4 380.4,238.2 383.2,238.2 386.1,238.2 387.3,237.9 M387.3,237.9 388.5,242.4 388.8,246.6 388.8,249.7 390.3,252.0 M387.3,237.9 389.5,238.2 M389.5,238.2 390.8,243.0 391.0,246.3 391.3,249.7 391.4,251.5 M389.5,238.2 393.2,235.7 393.2,234.7 M393.2,234.7 396.2,236.2 M396.2,236.2 396.4,240.5 394.2,243.8 394.0,247.2 394.1,251.1 M387.8,227.1 388.3,229.8 389.8,232.6 392.5,233.4 393.2,234.7 M396.2,236.2 396.3,234.0 397.4,231.2 400.8,230.1 404.0,232.3 407.0,231.7 410.9,233.1 413.6,231.6 418.1,232.3 420.8,230.6 M420.8,230.6 420.5,228.4 422.9,225.0 425.3,221.6 425.4,218.5 425.7,215.2 426.0,211.8 424.8,208.2 423.7,204.5 M420.8,230.6 422.0,232.3 M422.0,232.3 422.3,234.3 423.3,236.8 421.4,238.2 419.9,242.1 417.5,245.5 416.5,249.4 413.5,249.2 411.6,250.0 409.2,252.7 408.6,255.6 M422.0,232.3 424.0,233.4 424.5,236.0 424.6,239.3 425.6,241.2 422.4,241.0 421.8,242.0 424.9,246.6 425.7,248.0 M425.7,248.0 423.5,251.7 423.2,255.1 424.5,257.9 427.5,262.9 M427.5,262.9 427.0,264.3 423.3,263.2 420.3,262.9 M420.3,262.9 415.4,262.9 M415.4,262.9 411.6,262.5 M415.4,262.9 415.5,266.3 411.6,266.3 M420.3,262.9 420.3,265.4 422.5,265.2 423.3,266.9 421.8,269.1 423.3,270.8 423.0,274.4 422.3,275.8 418.3,275.6 416.1,277.0 416.8,279.2 414.8,280.2 M425.7,248.0 428.6,247.8 431.8,246.6 434.3,243.8 437.7,243.5 440.9,239.3 443.8,238.2 M443.8,238.2 441.0,233.4 441.9,230.1 442.6,229.2 442.3,227.0 443.7,225.0 446.2,225.0 446.0,219.7 445.8,214.3 M443.8,238.2 445.3,241.0 446.6,241.9 M446.6,241.9 448.4,245.5 449.9,247.8 452.7,250.8 455.2,254.8 M455.2,254.8 451.7,254.8 448.0,255.1 444.3,255.9 443.1,257.3 439.3,257.0 435.6,255.1 433.4,257.0 433.4,259.3 M433.4,259.3 430.7,259.0 428.5,259.3 427.5,262.9 M433.4,259.3 432.2,262.9 431.5,268.3 430.7,271.1 428.2,274.2 427.0,277.2 426.7,280.2 424.5,281.7 423.0,282.7 420.5,282.9 419.8,282.0 M419.8,282.0 419.0,281.5 417.0,283.1 M419.8,282.0 418.3,285.1 417.6,285.4 M417.8,286.0 419.5,285.7 424.0,285.7 428.4,285.7 429.1,289.3 430.6,291.9 435.0,291.6 435.6,288.8 438.0,288.8 441.2,289.6 441.3,292.7 441.4,295.8 442.1,300.0 446.3,299.7 446.5,299.7 M446.6,241.9 449.0,240.2 452.8,242.4 456.5,242.7 458.9,242.1 460.2,241.6 461.4,240.2 463.9,241.6 466.0,239.6 467.2,236.2 468.9,234.8 469.2,238.8 471.0,240.5 471.6,242.6 M471.6,242.6 472.0,239.3 473.4,238.5 473.8,236.0 476.2,233.4 476.9,230.9 477.0,228.9 M477.0,228.9 476.7,226.7 477.9,221.4 481.7,218.5 M477.0,228.9 479.7,228.7 480.4,227.2 483.1,228.1 486.4,228.7 487.9,229.5 489.9,231.2 491.8,234.0 M491.8,234.0 493.5,233.4 M491.8,234.0 490.4,236.5 490.4,238.2 493.2,238.3 M493.2,238.3 494.0,236.9 M493.2,238.3 493.0,240.2 495.0,242.7 496.1,243.8 499.8,245.2 503.6,246.6 506.0,246.6 502.4,250.8 498.8,255.1 495.1,255.6 491.4,257.3 491.2,258.0 M491.2,258.0 488.9,261.2 489.0,266.4 489.0,271.5 490.4,273.7 M491.2,258.0 488.4,257.2 486.2,258.1 485.2,259.4 481.8,259.0 478.7,256.6 476.5,256.6 474.7,253.9 M474.7,253.9 473.2,250.3 470.9,247.8 468.9,246.9 469.6,245.5 471.6,244.9 471.6,242.6 M474.7,253.9 471.6,257.3 M471.6,257.3 469.1,258.1 467.1,259.0 464.6,258.4 463.8,259.3 M463.8,259.3 460.9,256.2 457.7,257.0 455.2,254.8 M471.6,257.3 472.6,259.3 473.8,262.1 474.1,263.8 473.1,266.0 471.7,268.3 471.6,268.9 M471.6,272.0 476.0,274.8 480.5,277.5 480.8,278.9 484.4,282.2 M463.8,259.3 463.7,262.4 464.9,263.1 463.0,265.7 461.5,267.4 460.7,270.5 460.7,273.0 M460.7,273.0 463.0,272.0 M463.0,272.0 466.1,272.0 M460.7,273.0 459.2,276.7 M459.2,276.7 461.7,275.7 462.9,275.8 M462.9,275.8 463.8,275.6 463.0,272.0 M462.9,275.8 463.7,278.4 461.6,281.5 460.2,281.6 M460.2,281.6 459.7,278.4 459.2,276.7 M460.2,281.6 460.6,286.0 462.0,289.0 463.3,292.1 M463.3,292.1 458.8,293.0 457.5,295.2 457.9,298.6 457.3,302.2 458.8,303.9 460.7,303.4 460.6,306.7 457.3,304.2 455.3,303.6 453.6,302.7 451.4,302.5 449.7,300.6 447.5,301.1 446.5,299.7 M446.5,299.7 446.5,302.7 446.4,305.6 443.9,305.6 441.5,305.6 441.4,310.1 441.2,314.6 444.6,318.5 M444.6,318.5 447.7,318.3 449.1,319.1 M416.1,317.6 420.4,316.8 421.6,318.0 425.2,318.0 428.9,318.0 432.6,318.0 435.6,318.7 438.7,319.5 M438.7,319.5 441.6,319.0 444.6,318.5 M438.7,319.5 438.6,320.5 M438.6,320.5 441.7,320.6 444.7,320.8 446.7,319.7 449.1,319.1 M438.6,320.5 438.5,325.7 438.3,330.9 435.9,330.9 435.7,334.8 435.6,338.6 M435.6,338.6 435.4,343.7 435.2,348.9 432.7,350.3 429.4,349.7 428.0,348.0 426.6,349.4 M435.6,338.6 436.3,341.6 437.1,344.5 440.2,343.0 442.0,340.7 445.2,341.0 448.3,341.4 449.9,338.6 452.2,337.2 452.7,335.5 455.2,333.1 458.6,331.5 M458.6,331.5 455.3,329.8 454.7,326.7 451.2,324.2 450.8,322.5 449.1,319.1 M449.1,319.1 453.3,319.5 455.9,316.3 458.2,314.0 461.9,312.9 M458.6,331.5 463.3,332.0 M463.3,332.0 466.1,328.9 466.4,326.7 467.7,324.7 467.1,322.2 468.0,319.7 467.9,316.0 463.3,314.0 461.9,312.9 M461.9,312.9 461.5,310.7 465.2,309.5 469.0,308.4 M469.0,308.4 467.8,307.3 468.6,304.2 469.4,301.7 469.5,299.4 468.7,295.5 M468.7,295.5 466.1,294.5 463.3,292.1 M468.7,295.5 471.0,296.3 471.3,295.8 472.0,298.7 472.6,301.7 M472.6,301.7 475.6,301.4 479.8,302.0 482.3,301.1 487.0,298.6 M472.6,301.7 473.2,307.0 475.5,311.0 475.1,314.0 473.7,317.1 471.6,314.9 471.5,313.5 472.3,312.1 471.9,309.5 470.1,309.8 469.0,308.4 M463.3,332.0 464.4,337.4 464.4,342.0 M464.4,342.0 464.5,344.5 M464.5,344.5 466.4,344.5 M464.4,342.0 462.7,341.4 461.4,343.3 461.7,345.5 463.9,345.8 464.5,344.5 M451.7,352.2 453.5,350.3 455.7,349.4 457.5,351.7 456.6,353.4 454.3,355.0 452.5,354.2 451.7,352.2 M468.5,181.2 470.6,186.2 M491.1,164.8 493.0,168.0 494.5,168.6 493.9,173.6 496.2,176.4 500.1,178.9 501.0,182.0 503.0,185.0 M501.6,184.8 500.9,184.6 498.5,187.4 M498.5,187.4 500.7,187.6 501.4,188.9 503.1,188.9 M498.5,187.4 494.0,187.1 490.6,184.4 487.2,181.7 482.9,179.4 480.0,178.8 M480.0,178.8 478.6,175.4 M480.0,178.8 477.5,179.7 475.0,180.6 477.7,183.4 476.6,184.8 473.3,187.1 470.7,186.7 M470.8,186.2 471.3,182.0 471.3,178.1 471.7,177.1 M470.0,176.1 471.7,175.3 M485.5,164.9 483.1,166.9 483.7,169.1 483.4,172.5 481.0,173.9 478.6,175.4 M478.6,175.4 476.5,176.9 474.3,178.4 471.7,177.1 M471.7,177.1 471.7,175.3 M471.7,175.3 473.2,173.0 472.6,172.1 471.4,171.8 M471.1,168.1 472.0,167.4 472.3,165.7 473.5,166.2 475.5,165.7 477.9,166.0 481.7,164.9 485.5,164.9 M492.2,223.0 493.1,222.2 493.5,219.9 497.9,220.2 501.9,220.8 503.6,221.1 505.1,218.0 507.2,216.9 510.7,216.3 514.2,215.7 M514.2,215.7 515.8,219.0 517.4,222.3 M514.2,215.7 517.8,214.3 521.3,212.9 521.9,210.1 522.4,207.3 521.2,205.3 M521.2,205.3 518.0,205.0 514.8,204.6 512.1,201.4 512.1,201.0 M521.2,205.3 522.2,201.1 522.8,199.7 523.4,199.0 M510.0,199.6 511.0,200.0 M512.1,164.2 515.4,162.1 519.2,161.8 521.9,162.8 524.5,163.8 529.5,166.3 530.3,169.1 M530.3,169.1 529.4,172.8 530.0,176.1 531.5,180.6 533.8,180.9 532.3,185.3 M532.3,185.3 534.8,188.5 537.7,189.8 538.1,192.7 539.5,194.4 536.3,195.4 535.9,198.3 M532.3,185.3 536.4,186.5 540.9,185.9 545.3,185.3 545.0,182.3 548.3,179.8 551.3,179.5 551.1,176.4 552.8,175.3 551.7,173.6 554.2,173.3 554.6,170.2 553.1,167.7 555.6,165.7 559.0,165.6 560.8,164.5 M530.3,169.1 532.8,170.0 534.6,168.4 537.3,167.1 537.5,164.9 541.4,164.2 M541.4,164.2 544.4,164.6 M544.4,164.6 548.0,164.9 549.7,163.5 549.8,162.1 551.7,161.5 553.4,165.2 553.3,166.0 556.0,164.6 558.2,164.1 560.8,164.5 M541.4,164.2 540.8,162.4 537.6,161.0 534.4,159.6 530.0,156.8 527.9,153.2 523.7,152.9 522.9,150.7 519.3,149.0 516.8,153.2 514.4,153.1 M514.4,153.1 511.3,151.2 509.8,151.1 M508.0,151.0 507.1,150.9 506.9,151.2 M514.4,153.1 513.1,148.0 511.8,142.9 514.3,142.1 516.9,141.3 520.3,143.0 523.7,144.8 526.4,147.1 529.6,146.8 532.7,146.5 536.0,148.4 536.3,150.1 539.1,151.9 541.9,153.7 542.4,154.6 544.0,153.2 547.5,150.5 M544.4,164.6 544.8,161.8 542.7,158.2 545.5,156.0 548.3,156.0 M548.3,156.0 547.4,154.0 M547.5,150.5 550.4,153.2 553.8,154.6 551.6,155.7 548.3,156.0 M548.3,156.0 546.5,157.9 548.8,158.0 551.2,158.1 553.7,158.2 556.3,158.3 M547.5,150.5 550.3,150.1 553.1,149.7 552.7,148.4 555.2,148.7 557.8,148.9 560.9,148.8 564.0,148.7 568.5,150.7 M568.5,150.7 566.7,152.3 564.7,154.0 562.0,154.1 559.4,155.1 556.3,158.3 M556.3,158.3 557.2,160.7 559.9,161.1 560.8,164.5 M560.8,164.5 563.3,166.0 566.6,168.6 568.9,169.4 M568.9,169.4 572.4,172.8 573.3,176.4 573.8,180.6 576.0,182.0 580.1,184.3 M580.1,184.3 582.7,184.0 587.6,186.8 592.0,189.6 595.5,190.5 598.5,190.7 M568.9,169.4 564.8,170.5 560.6,171.6 561.5,176.4 565.3,178.4 563.5,180.1 564.4,182.0 563.3,184.8 561.5,187.6 559.6,190.7 556.5,190.5 554.3,193.3 556.4,196.4 558.5,198.9 558.9,200.6 556.3,200.7 553.6,200.8 552.4,202.5 M580.1,184.3 578.8,188.2 583.8,190.7 586.4,191.4 588.9,192.0 593.7,194.4 596.5,194.7 599.3,194.9 M599.3,194.9 598.5,190.7 M598.5,190.7 600.7,192.4 600.8,191.9 602.8,189.6 606.9,191.0 M606.9,191.0 610.4,188.5 614.1,186.8 617.6,187.4 620.4,189.9 M600.8,192.7 603.2,194.1 605.8,193.9 608.4,193.7 606.9,191.0 M599.3,194.9 601.5,195.2 603.6,196.1 603.9,198.0 607.1,198.3 610.3,198.6 609.7,200.6 607.9,201.7 608.6,204.2 609.3,204.5 610.7,202.5 612.2,207.4 M612.2,207.4 612.0,210.4 M599.3,194.9 599.8,196.6 601.8,198.3 600.2,200.3 601.8,200.8 602.5,203.9 603.4,207.3 603.8,207.9 M620.4,189.9 618.2,192.4 616.3,194.4 615.6,198.3 616.4,201.7 613.0,201.7 613.7,204.5 613.1,207.3 612.2,207.4 M620.4,189.9 624.1,191.6 625.1,196.4 623.0,199.4 623.9,202.0 626.9,203.9 628.2,207.0 630.9,208.7 633.1,208.4 M633.1,208.4 631.1,211.9 M631.1,211.9 628.6,213.5 626.2,216.9 625.1,217.1 627.1,220.5 629.1,223.9 628.4,226.4 631.1,230.6 631.7,233.7 632.9,236.0 631.2,239.9 630.8,241.0 M633.1,208.4 634.8,209.7 634.4,206.5 635.2,206.2 M635.2,206.2 639.3,205.6 642.5,203.7 646.0,205.1 646.2,207.3 649.8,208.6 M635.2,206.2 637.6,208.2 640.6,211.8 642.9,212.9 641.0,214.6 644.2,216.6 646.5,219.7 648.8,222.8 651.2,225.6 651.6,227.8 M651.6,227.8 651.9,231.0 652.2,234.3 648.5,236.5 648.4,238.2 645.2,239.8 M631.1,211.9 632.7,214.3 634.1,214.3 634.5,217.1 634.9,219.9 636.9,218.0 638.2,218.7 641.5,217.7 643.7,220.2 644.2,223.0 646.6,226.1 646.8,228.8 645.9,228.9 M645.9,228.9 648.0,229.8 651.6,227.8 M645.9,228.9 643.2,228.9 640.5,228.9 639.3,230.9 641.0,236.4 M635.1,251.0 637.7,253.1 640.1,251.5 M659.3,263.4 661.4,266.6 665.1,265.2 669.3,265.4 672.0,262.9 673.7,260.7 674.3,256.9 678.8,257.3 M737.0,276.4 736.8,281.0 736.5,285.5 736.2,290.1 735.8,294.7 M696.1,294.2 696.4,295.5 M577.5,131.5 580.4,134.1 583.8,135.9 587.1,137.7 589.1,142.1 592.2,142.6 595.3,143.0 600.4,145.0 604.5,149.1 608.6,149.3 612.7,149.4 617.0,149.8 621.2,151.1 625.4,152.3 627.7,151.2 629.9,150.0 634.0,150.0 636.5,147.3 638.1,146.5 635.9,144.6 636.0,142.8 640.3,143.6 642.1,142.3 643.9,141.0 644.5,139.3 647.9,138.8 651.2,138.2 649.9,136.9 646.1,134.9 645.0,135.6 640.8,135.5 639.8,134.9 638.9,129.6 M577.5,131.5 580.6,129.5 582.9,128.3 585.1,127.0 589.6,127.7 593.4,128.8 597.2,129.9 598.2,127.9 595.4,124.3 596.9,123.4 601.1,124.5 605.2,125.5 606.7,127.6 609.7,127.9 612.8,128.1 616.3,128.3 622.0,131.0 624.5,131.2 627.1,131.5 629.0,131.0 631.0,130.4 633.0,128.5 635.9,129.1 638.9,129.6 M638.9,129.6 642.0,130.6 643.1,128.3 642.8,124.7 642.4,122.3 640.5,121.8 641.9,120.3 644.2,120.0 646.4,119.6 649.0,120.3 651.7,121.0 656.6,124.7 661.4,128.5 662.5,129.8 667.3,130.8 673.6,135.5 677.1,135.5 678.8,134.6 680.6,133.7 681.3,133.4 682.3,138.0 683.1,142.6 680.0,142.1 678.8,143.3 681.8,147.1 682.0,150.0 M577.5,131.5 576.5,131.7 M576.5,131.7 574.1,133.6 575.2,136.6 572.3,136.7 569.4,136.9 569.8,141.5 567.4,142.4 565.1,143.2 568.9,147.9 568.5,150.7 M576.5,131.7 573.6,130.4 570.8,129.2 565.6,126.5 562.2,126.8 558.8,127.0 554.9,123.7 550.9,120.3 547.1,118.4 545.2,119.1 543.3,119.8 540.6,118.4 538.2,118.2 535.8,117.9 533.8,115.0 529.8,114.8 526.5,116.1 523.1,117.4 520.4,117.8 517.8,118.2 515.2,118.6 516.2,123.0 519.0,125.8 515.6,127.0 512.5,126.4 509.6,127.0 506.7,127.6 503.8,126.5 501.2,125.5 498.5,124.5 495.3,124.6 493.5,126.1 491.7,127.6 491.7,129.8 488.5,133.6 490.7,135.3 492.7,135.5 495.3,139.1 495.8,139.2 M671.8,156.9 673.9,154.0 674.7,151.8 677.1,151.2 679.0,150.9 679.9,148.6 682.0,150.0 M682.0,150.0 682.5,150.4 M678.8,163.1 680.1,161.5 682.8,160.7 M442.7,79.1 439.5,80.3 M439.5,80.3 437.0,77.9 433.8,78.7 433.6,79.9 431.9,80.5 430.2,81.0 427.0,80.4 424.3,80.3 M424.3,80.3 422.3,80.9 420.3,81.6 417.1,83.0 414.5,87.4 413.4,91.3 410.4,93.6 411.1,96.5 411.8,99.4 411.7,102.7 410.7,103.2 409.8,104.9 M424.3,80.3 427.4,81.6 430.4,83.0 430.7,84.7 431.8,86.4 432.4,88.1 M439.5,80.3 439.2,82.3 442.1,83.7 441.0,85.4 443.6,88.4 443.4,90.6 445.3,92.1 444.6,93.3 448.0,95.3 445.4,99.4 442.2,101.3 M443.2,104.1 442.2,105.8 442.9,108.4 442.8,109.1 M442.8,109.1 444.2,111.0 445.2,112.7 M445.2,112.7 442.1,113.9 M442.1,113.9 441.2,115.9 440.4,117.6 438.4,118.1 436.4,118.6 M436.4,118.6 437.7,121.9 437.6,125.1 M437.6,125.1 439.0,127.9 436.2,131.7 M436.2,131.7 435.5,133.6 M435.5,133.6 437.3,134.7 M437.3,134.7 440.8,134.8 443.0,134.4 445.3,134.0 M442.8,109.1 441.0,109.2 438.4,107.9 436.5,108.2 M442.1,113.9 438.5,112.3 436.5,112.3 434.4,112.2 430.5,112.9 M436.4,118.6 434.8,117.5 M434.8,117.5 434.1,115.6 431.3,115.1 M434.8,117.5 431.5,117.4 428.2,117.2 M445.2,112.7 447.3,113.1 449.4,113.5 451.5,115.8 451.4,117.4 455.9,120.0 453.3,120.6 454.7,123.5 M454.7,123.5 452.6,125.7 449.7,125.3 446.9,124.9 443.6,124.5 440.4,124.1 437.6,125.1 M454.7,123.5 458.8,122.9 463.0,126.5 465.7,128.4 469.2,129.5 471.5,129.9 473.9,130.3 473.8,133.0 474.0,135.1 471.2,137.1 M445.3,134.0 448.3,133.8 451.1,134.9 453.7,139.1 451.2,140.2 449.8,141.7 M449.8,141.7 453.1,142.2 M445.3,134.0 449.1,137.7 449.8,141.7 M436.2,131.7 432.7,130.8 430.2,131.4 428.0,130.6 M428.0,130.6 425.3,128.4 423.6,128.1 422.3,127.6 419.4,126.8 419.0,126.8 M419.0,126.8 418.5,123.8 417.1,121.5 417.1,118.7 M419.0,126.8 415.2,128.1 413.3,128.4 414.2,129.5 417.3,132.6 M417.3,132.6 419.8,131.9 424.1,133.0 M424.1,133.0 426.3,131.9 428.0,130.6 M424.1,133.0 424.7,134.7 M424.7,134.7 428.4,135.2 430.9,134.1 433.2,133.8 435.5,133.6 M424.7,134.7 423.5,137.4 422.7,137.8 M422.7,137.8 419.5,138.9 417.5,138.8 M417.5,138.8 414.1,137.4 410.4,137.8 M410.4,137.8 408.2,136.0 M408.2,136.0 410.3,136.0 413.0,135.9 415.7,135.8 415.2,134.7 417.3,132.6 M437.3,134.7 434.1,139.3 432.0,139.9 M432.0,139.9 429.1,140.4 M429.1,140.4 425.5,140.3 423.7,138.8 M423.7,138.8 422.7,137.8 M408.2,136.0 405.9,135.5 403.9,135.8 M403.9,135.8 402.4,136.6 400.8,139.3 402.3,140.2 402.8,140.4 M402.8,140.4 405.8,139.1 407.2,140.6 410.4,137.8 M402.8,140.4 402.2,142.6 402.9,145.1 404.1,146.2 M403.9,135.8 405.1,131.9 401.1,130.6 M401.1,130.6 400.1,127.0 M400.1,127.0 400.5,124.1 401.7,123.3 402.2,120.6 M401.1,130.6 400.3,130.6 396.3,129.2 396.1,128.4 392.7,126.2 M394.6,125.5 398.0,125.3 399.9,126.5 400.1,127.0 M405.2,116.0 406.9,116.3 M367.3,151.5 368.8,150.9 372.4,151.4 373.2,152.3 371.6,154.0 371.3,157.6 370.1,157.8 371.2,159.6 370.5,161.8 369.9,163.6 370.2,164.6 M383.3,147.5 385.7,148.7 388.9,149.0 391.2,149.8 394.4,150.0 M417.5,138.8 417.4,140.7 417.8,141.3 M417.4,141.5 421.2,141.5 422.0,139.6 423.7,138.8 M422.3,142.4 425.1,142.4 427.3,142.8 429.6,143.2 M429.6,143.2 430.6,144.8 431.3,147.9 M431.3,147.9 428.9,149.7 M422.3,142.4 423.5,145.1 426.9,148.3 428.9,149.7 M429.6,143.2 429.4,141.5 429.1,140.4 M432.0,139.9 434.8,142.4 435.2,143.5 437.4,143.7 438.0,145.1 M438.0,145.1 437.6,147.1 439.0,148.4 437.9,150.4 M437.9,150.4 439.5,153.0 M439.5,153.0 442.9,152.6 447.0,152.1 M447.0,152.1 450.6,151.2 M438.0,145.1 441.1,146.5 443.3,146.2 445.5,145.8 448.1,145.4 451.4,146.4 M447.0,152.1 447.7,153.2 446.6,154.7 M439.5,153.0 437.3,153.7 435.1,154.4 M435.1,154.4 434.4,156.5 433.2,157.6 M435.1,154.4 433.8,152.6 433.8,151.5 M433.8,151.5 432.4,149.6 M432.4,149.6 431.2,151.5 431.1,151.6 M437.9,150.4 436.1,150.5 M436.1,150.5 433.8,151.5 M431.3,147.9 433.1,148.9 M433.1,148.9 432.4,149.6 M433.1,148.9 434.0,147.8 436.4,149.4 436.1,150.5 M372.2,115.6 370.4,117.2 372.1,118.0 374.3,118.2 M481.6,152.6 486.1,153.7 M486.1,153.7 487.2,156.5 489.9,157.6 M489.9,157.6 488.2,158.5 489.4,161.3 491.1,164.8 M491.1,164.8 488.3,164.8 485.5,164.9 M477.1,147.3 480.0,147.6 482.8,147.9 486.5,149.6 489.4,150.5 492.3,151.5 492.6,151.6 M492.6,151.6 495.9,153.5 497.3,151.7 M492.6,151.6 493.0,153.9 489.5,153.2 M489.5,153.2 486.1,153.7 M489.5,153.2 491.1,154.6 492.7,157.9 494.2,159.9 M489.9,157.6 494.2,159.9 M494.2,159.9 497.2,157.6 500.0,161.1 M134.9,78.9 129.4,83.3 124.1,87.8 118.9,92.5 113.7,97.2 108.7,101.9 110.3,102.3 111.9,102.7 M111.9,102.7 112.0,105.5 115.4,104.1 118.3,103.2 118.0,104.5 119.0,106.8 118.5,110.5 119.4,111.8 120.2,113.1 117.8,115.8 115.8,116.6 M121.0,131.9 125.2,131.9 129.4,131.9 133.6,131.9 M133.6,131.9 135.7,131.9 M135.7,131.9 137.8,131.9 140.0,131.9 M140.0,131.9 142.9,131.9 145.9,131.9 148.8,131.9 M148.8,131.9 153.1,131.9 157.4,131.9 161.7,131.9 M161.7,131.9 164.6,131.9 167.5,131.9 M167.5,131.9 170.5,131.9 173.5,131.9 176.6,131.9 M176.6,131.9 178.8,131.9 181.0,131.9 M181.0,131.9 181.8,132.7 185.1,133.0 187.7,134.4 189.8,134.5 192.0,134.7 M201.1,138.8 202.0,139.9 M201.9,148.4 200.1,150.4 199.4,151.1 M209.4,148.7 209.7,147.8 M216.8,145.1 219.7,143.3 221.2,142.9 224.2,142.9 M224.2,142.9 228.3,142.9 M228.3,142.9 229.5,142.2 M229.5,142.2 230.2,141.8 231.8,140.4 233.3,138.2 235.7,136.2 237.6,136.4 238.5,137.1 237.2,141.0 237.7,142.1 238.2,143.2 M113.7,139.5 115.3,139.7 115.3,141.1 118.9,141.1 123.5,140.3 124.3,140.2 126.6,140.2 128.9,140.2 M133.6,131.9 131.4,135.5 129.3,139.1 128.9,140.2 M128.9,140.2 129.0,141.5 126.1,145.1 125.5,145.7 124.0,148.4 122.5,151.2 M106.1,151.2 109.3,151.2 112.6,151.2 115.8,151.2 M115.8,151.2 119.2,151.2 122.5,151.2 M122.5,151.2 125.9,151.2 129.3,151.2 M129.3,151.2 132.7,151.2 136.1,151.2 M115.8,151.2 113.6,155.4 111.5,159.6 114.0,163.3 116.6,167.1 119.3,170.8 M119.3,170.8 118.5,172.8 117.4,176.4 116.6,177.3 M129.3,151.2 127.0,155.9 124.8,160.5 122.8,165.2 M122.8,165.2 121.9,167.4 120.1,167.7 119.3,170.8 M122.8,165.2 126.7,165.2 130.5,165.2 134.4,165.2 M134.4,165.2 137.9,165.2 141.3,165.2 144.8,165.2 148.3,165.2 M148.3,165.2 150.6,165.2 M150.6,165.2 154.9,165.2 159.2,165.2 163.5,165.2 167.9,165.2 M135.7,131.9 134.0,134.7 134.0,136.0 135.2,138.5 133.8,141.3 134.6,143.5 135.4,144.6 139.6,144.3 M140.4,142.9 139.6,144.3 M139.6,144.3 137.8,147.8 136.1,151.2 M136.1,151.2 134.7,154.0 137.0,154.0 139.2,154.0 M139.2,154.0 143.0,154.0 146.8,154.0 150.6,154.0 M150.6,154.0 152.9,154.0 155.2,154.0 M140.4,142.9 144.3,142.9 148.2,142.9 152.0,142.9 155.9,142.9 M161.7,131.9 159.4,136.1 157.3,140.3 M157.3,140.3 155.9,142.9 M155.9,142.9 154.6,145.7 153.2,148.4 M153.2,148.4 151.9,151.2 150.6,154.0 M139.2,154.0 137.5,157.7 135.9,161.5 134.4,165.2 M134.4,165.2 132.4,170.5 130.5,175.8 128.7,181.1 M155.2,154.0 154.0,156.8 M154.0,156.8 152.2,161.0 150.6,165.2 M154.0,156.8 157.8,156.8 161.7,156.8 165.5,156.8 169.4,156.8 M148.3,165.2 146.6,169.9 145.0,174.5 143.5,179.2 139.3,179.2 135.1,179.2 135.1,179.9 M147.9,166.6 151.4,166.6 154.9,166.6 153.0,172.1 154.5,173.0 157.2,173.6 159.3,174.2 161.7,174.0 165.1,174.6 166.1,174.9 M157.3,140.3 161.4,140.3 165.6,140.3 169.7,140.3 173.8,140.3 M153.2,148.4 157.4,148.4 161.5,148.4 165.7,148.4 168.8,149.1 169.6,149.8 M176.6,131.9 175.6,134.7 174.7,137.4 173.8,140.3 M173.8,140.3 172.4,143.7 170.9,147.1 M170.9,147.1 174.9,147.1 178.8,147.1 182.7,147.1 M168.9,155.1 172.0,155.1 175.2,155.1 178.3,155.1 M169.6,149.8 169.3,152.6 168.9,155.1 M168.9,155.1 169.4,156.8 M169.4,156.8 170.0,159.3 168.9,162.2 167.9,165.2 M167.9,165.2 167.4,166.6 M167.4,166.6 166.7,169.7 165.1,174.6 M166.1,174.9 165.6,176.4 M165.6,176.4 164.8,179.2 164.6,182.0 164.2,184.6 163.6,185.7 M167.4,166.6 170.8,166.6 174.3,166.6 177.8,166.6 176.7,168.0 178.4,168.0 M165.6,176.4 169.0,176.4 172.4,176.4 M184.1,138.4 183.4,139.9 181.5,141.5 180.8,143.6 182.0,145.1 183.0,146.2 182.7,147.1 M182.7,147.1 182.0,149.3 182.8,149.8 M182.8,149.8 183.0,151.8 180.4,153.5 178.7,155.7 178.0,157.1 178.9,159.6 179.8,160.1 179.4,161.3 180.0,164.3 180.5,165.2 M180.5,165.2 179.3,166.6 M179.3,166.6 178.4,168.0 M178.4,168.0 176.6,170.5 176.3,170.8 M176.3,170.8 175.0,171.9 173.2,174.2 172.4,176.4 M172.4,176.4 172.2,178.4 170.4,180.6 169.8,182.0 174.2,182.0 174.0,184.3 M182.8,149.8 186.0,149.8 189.2,149.8 M188.2,138.6 190.7,139.9 192.3,140.7 192.7,141.9 192.6,142.6 M189.0,151.9 187.7,155.3 186.5,158.8 185.8,160.1 184.0,162.7 M180.5,165.2 182.1,164.9 183.9,162.9 186.3,162.7 188.7,162.4 189.7,161.5 192.2,160.1 193.2,159.3 194.6,160.6 197.0,161.1 M197.0,161.1 198.0,160.7 199.7,159.0 202.2,157.5 203.6,155.1 203.8,155.0 M195.1,152.1 193.8,155.7 192.5,159.3 M189.0,151.9 192.1,151.9 195.1,152.0 198.2,152.0 M205.1,151.3 203.8,155.0 M203.8,155.0 202.9,157.6 205.3,157.6 M205.3,157.6 209.5,157.6 213.7,157.6 M207.1,150.4 206.8,151.2 210.2,151.2 213.5,151.2 216.8,151.2 217.7,153.0 M217.7,153.0 219.2,154.0 M217.7,153.0 216.3,154.4 215.9,155.1 216.6,156.2 215.5,157.1 214.1,158.2 M179.3,166.6 183.8,166.5 188.3,166.4 192.8,166.3 M192.8,166.3 197.4,166.3 M197.4,166.3 201.9,166.4 206.4,166.4 210.9,166.4 M197.4,166.3 194.9,168.0 193.5,168.7 191.2,169.7 190.1,170.8 M176.1,170.8 176.3,170.8 M176.3,170.8 181.0,170.8 M181.0,170.8 184.0,170.8 187.1,170.8 M187.1,170.8 190.1,170.8 M190.1,170.8 192.9,170.8 M192.9,170.8 194.7,170.2 197.8,170.4 198.2,171.3 200.7,171.4 202.7,174.0 M181.0,170.8 179.4,175.1 178.0,179.5 176.9,184.1 M187.1,170.8 186.7,173.8 186.3,176.8 186.4,178.4 185.8,180.5 185.5,182.0 M179.4,183.7 179.3,182.0 182.4,182.0 185.5,182.0 M185.5,182.0 185.5,182.9 188.7,183.1 191.9,183.3 192.1,183.9 193.7,182.9 M192.9,170.8 193.0,172.3 194.1,174.3 195.2,176.4 195.5,178.5 195.9,179.1 M197.0,161.1 197.0,163.2 197.6,163.7 M197.6,163.7 194.7,165.6 192.8,166.3 M197.6,163.7 199.2,164.5 201.5,163.8 204.2,161.0 205.8,160.1 207.7,158.3 208.9,158.8 M205.3,157.6 204.8,159.0 206.8,157.9 208.2,157.8 208.9,158.8 M208.9,158.8 209.9,159.7 209.2,161.3 211.0,162.5 M213.7,157.6 212.9,161.1 214.4,161.1 M224.2,142.9 222.7,146.8 222.3,149.1 221.1,151.1 221.0,151.1 M221.0,151.1 220.4,153.2 219.8,154.0 M228.3,142.9 227.6,144.3 226.3,145.1 225.2,146.8 224.1,149.2 M222.3,149.2 226.6,149.3 227.9,148.8 M221.0,151.1 223.4,151.2 225.8,151.2 M224.9,151.2 224.1,153.1 M229.5,142.1 229.5,142.2 M229.5,142.2 228.4,146.0 228.3,148.3 M140.9,80.6 135.6,85.2 138.0,85.2 140.5,85.2 139.4,87.6 138.5,90.1 139.1,91.3 139.7,92.6 137.1,97.1 137.6,98.6 138.1,100.1 140.0,101.4 142.0,102.7 M111.9,102.7 115.6,102.7 119.4,102.7 123.2,102.7 126.9,102.7 130.7,102.7 134.5,102.7 138.2,102.7 142.0,102.7 M142.0,102.7 145.8,102.7 149.5,102.7 M149.5,102.7 152.8,102.7 156.1,102.7 159.4,102.7 162.7,102.7 166.0,102.7 169.3,102.7 M169.3,102.7 172.5,102.7 175.7,102.7 178.9,102.7 182.0,102.7 185.2,102.7 M185.2,102.7 188.8,102.7 192.3,102.7 195.9,102.7 199.5,102.7 M149.5,102.7 146.1,106.7 142.7,110.8 139.4,114.8 136.2,119.0 136.9,120.8 137.7,122.7 138.6,124.3 139.7,126.0 140.5,127.9 139.8,130.3 140.0,131.9 M169.3,102.7 165.6,107.5 162.0,112.3 158.5,117.1 155.1,122.0 151.8,126.9 148.8,131.9 M185.2,102.7 181.9,107.5 178.8,112.3 175.8,117.1 172.9,122.0 170.1,126.9 167.5,131.9 M185.2,102.7 187.9,99.1 190.6,95.6 193.4,92.1 190.3,91.6 187.1,91.2 184.0,90.7 180.8,90.3 177.7,89.8 175.8,88.1 174.0,86.4 171.6,85.2 169.3,84.0 167.1,82.8 171.0,79.1 M181.0,131.9 183.7,126.8 186.6,121.6 191.5,118.9 196.3,116.2 201.1,113.6 205.8,110.9 M217.7,125.8 215.4,130.9 213.2,136.0 212.1,138.8 214.0,139.6 215.9,140.4 218.2,141.5 222.4,141.4 221.9,142.5 M265.6,125.3 266.1,123.8 262.6,123.8 259.1,123.8 255.6,123.8 252.1,123.8 252.1,122.2 249.5,123.5 247.4,123.4 245.3,123.3 246.5,118.4 248.6,115.5 250.8,115.6 253.1,115.8 255.9,114.5 255.9,110.5 259.1,106.1 259.3,102.3 M236.1,136.2 237.9,134.9 240.4,134.7 242.4,134.7 M245.1,140.6 246.1,140.2 M210.2,236.9 208.7,237.9 206.9,243.0 208.3,245.8 209.1,249.4 213.8,249.4 215.4,252.0 220.2,251.7 219.3,257.0 219.8,259.8 220.4,262.6 221.3,265.7 M221.3,265.7 220.9,264.3 217.5,264.3 214.2,264.3 214.1,266.0 215.9,267.4 213.6,267.7 213.6,269.7 215.1,272.5 214.5,276.7 213.9,280.9 M213.9,280.9 212.0,279.8 213.6,276.7 210.1,276.3 206.5,275.8 204.7,272.8 200.7,269.4 M200.7,269.4 198.0,268.0 195.3,268.0 191.8,265.0 M200.7,269.4 199.8,273.3 197.1,276.4 193.4,278.9 192.3,282.0 190.0,281.6 188.3,281.5 188.2,278.6 M213.9,280.9 210.3,282.2 206.7,283.4 205.6,286.7 204.4,289.9 207.0,294.4 209.0,297.2 212.9,295.8 213.1,300.0 215.6,299.9 M215.6,299.9 218.0,304.2 217.5,307.6 217.4,312.1 218.1,314.6 217.2,318.3 M217.2,318.3 215.3,320.6 M217.2,318.3 219.1,322.5 220.4,325.3 221.5,329.5 222.6,333.1 224.3,333.1 M215.6,299.9 219.5,299.2 222.6,297.7 225.7,296.3 226.2,301.4 228.6,304.2 232.7,305.6 237.2,307.0 239.2,307.3 239.0,311.5 239.7,314.9 244.1,314.9 244.6,317.7 246.7,319.7 246.2,322.5 245.5,324.7 245.6,325.7 M245.6,325.7 243.1,323.4 240.0,323.9 236.9,324.3 235.6,326.7 235.2,331.6 M235.2,331.6 231.4,333.3 229.0,331.2 226.5,330.3 224.3,333.1 M224.3,333.1 224.9,333.7 224.5,336.5 221.8,337.9 222.4,343.0 221.7,346.1 221.0,349.1 220.6,353.4 220.2,357.6 222.5,362.6 223.5,365.2 222.6,368.2 222.2,372.2 223.0,375.0 223.9,377.8 223.0,380.3 223.9,383.6 224.9,387.0 225.9,389.8 226.9,392.5 M229.2,396.7 229.4,400.8 229.6,404.9 228.5,407.6 230.9,410.9 233.0,412.2 234.5,414.4 236.6,414.4 238.8,414.4 242.4,415.3 M242.5,416.2 243.7,419.2 245.1,422.2 M235.2,331.6 239.7,335.9 242.5,337.4 245.3,338.8 248.3,340.2 246.6,345.5 249.3,345.8 251.9,346.1 253.1,345.8 255.7,341.0 M255.7,341.0 255.9,336.5 253.2,336.2 252.4,332.0 249.7,331.6 247.0,331.2 246.4,327.5 245.6,325.7 M255.7,341.0 258.0,342.7 258.1,345.2 255.9,347.0 253.7,348.9 250.2,353.9 M250.2,353.9 250.0,357.2 249.9,360.4 250.1,364.3 M250.2,353.9 254.3,355.6 258.2,357.9 262.0,360.9 261.8,363.9 M221.3,265.7 224.8,266.9 228.6,264.6 228.3,262.1 230.1,262.9 228.2,257.6 231.6,258.7 236.1,256.5 236.9,254.5 M236.9,254.5 235.2,252.5 236.0,250.3 238.1,249.2 239.4,245.8 M236.9,254.5 238.6,255.1 239.6,258.1 238.7,262.6 240.9,265.4 243.4,264.9 247.2,263.8 M247.2,263.8 245.2,259.8 243.5,257.9 245.4,254.2 245.9,252.4 M247.2,263.8 248.7,262.1 251.9,262.6 M251.9,262.6 252.9,260.1 252.5,255.9 253.6,252.9 M251.9,262.6 255.9,262.9 256.9,262.1 259.2,257.7 M110.8,177.8 113.5,177.8 116.2,177.8 120.0,179.5 123.9,181.1 126.3,181.1 128.7,181.1 M128.7,181.1 130.7,181.1 131.1,179.9 135.1,179.9 M135.1,179.9 137.9,183.2 138.1,186.0 140.9,187.8 143.0,185.5 145.6,185.4 147.2,189.6 148.6,191.9 148.8,194.9 153.3,196.2 M160.7,228.2 160.9,226.1 162.4,224.0 165.4,223.9 163.5,220.6 164.5,220.6 164.7,219.1 169.2,219.1 M169.2,219.1 168.6,224.4 M168.6,224.4 169.2,224.4 M169.2,219.1 171.6,217.1 M168.6,224.4 167.7,228.7 M167.7,228.7 165.6,230.5 M167.7,228.7 169.6,230.2 171.2,231.5 M167.7,228.7 168.3,227.0 170.6,225.0 M171.4,232.5 174.0,230.3 176.5,229.9 178.9,227.5 182.9,227.0 M175.9,237.9 178.3,238.1 180.9,238.5 M182.3,246.5 182.4,243.5 183.4,242.3 M196.1,244.8 194.5,248.9" fill="none" stroke="#fff" stroke-width=".95"/>
</svg>
  <div id="tip">European Union (EU)</div>
  <div id="zpill"><span style="top:3px;font-size:20px">+</span><span style="top:33.8px;font-size:17px;transform:scaleX(1.35)">-</span></div>
</div>
<svg class="abs" style="left:767.8px;top:464.4px" width="11.2" height="16" viewBox="0 0 14 20"><path d="M2 1.500 V16 L5.500 12.800 L8 18.500 L10.300 17.500 L7.800 12 H12.500 Z" fill="#111" stroke="#fff" stroke-width="1"/></svg>
<svg class="abs" style="left:0;top:912px" width="12" height="12" viewBox="0 0 12 12"><path d="M0 0 V12 H10 A10 11 0 0 1 0 0Z" fill="#6e6555"/></svg>
<svg class="abs" style="left:1229px;top:912px" width="12" height="12" viewBox="0 0 12 12"><path d="M12 2 V12 H3 A9 10 0 0 0 12 2Z" fill="#6e6555"/></svg>
</body>
</html>
